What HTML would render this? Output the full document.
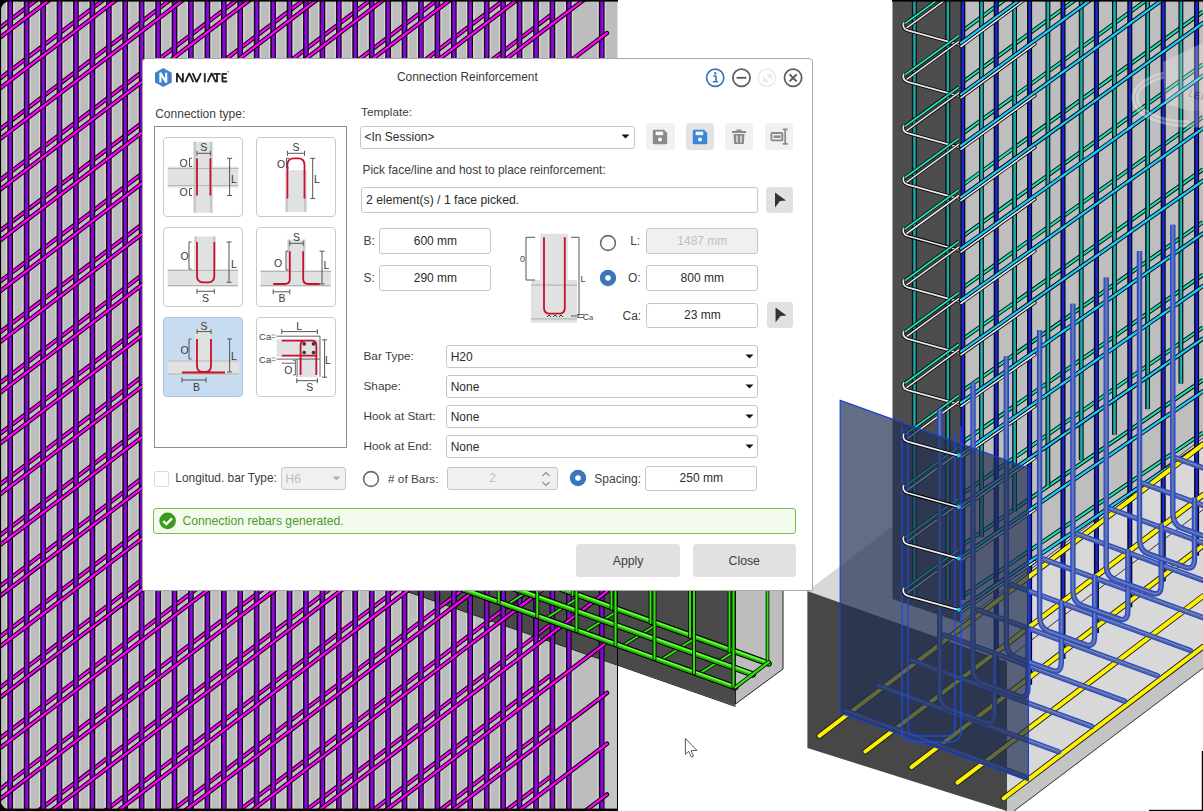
<!DOCTYPE html>
<html><head><meta charset="utf-8">
<style>
html,body{margin:0;padding:0;width:1203px;height:811px;overflow:hidden;background:#fff}
.t{position:absolute;font-family:"Liberation Sans", sans-serif;line-height:14px;white-space:nowrap}
.b{position:absolute;box-sizing:border-box}
svg{position:absolute}
</style></head><body>
<svg width="1203" height="811" viewBox="0 0 1203 811" style="position:absolute;left:0;top:0">
<rect width="1203" height="811" fill="#ffffff"/>
<polygon points="807.4,591 892.5,526.3 1203,290 1203,668.3 1014,811 1007,811 1007,662" fill="#d8d8d8"/>
<polygon points="1004,799.3 1203,645.5 1203,668.3 1014,811 1004,811" fill="#c4c4c4"/>
<line x1="1014" y1="811" x2="1203" y2="668.3" stroke="#333" stroke-width="1"/>
<polygon points="807.4,591 1007,662 1007,811 807.4,748" fill="#474747"/>
<polygon points="892.5,0 960.7,0 960.7,622.6 892.5,599" fill="#4d4d4d"/>
<polygon points="960.7,0 1203,0 1203,438 960.7,622.6" fill="#bebebe"/>
<line x1="960.7" y1="622.6" x2="1203" y2="438" stroke="#222" stroke-width="0.8"/>
<line x1="962.0" y1="31.3" x2="1011.3" y2="-5.0" stroke="#000" stroke-width="4.0" stroke-linecap="butt"/><line x1="962.0" y1="31.3" x2="1011.3" y2="-5.0" stroke="#1ee0b4" stroke-width="2.2" stroke-linecap="butt"/>
<line x1="962.0" y1="82.7" x2="1081.9" y2="-5.0" stroke="#000" stroke-width="4.0" stroke-linecap="butt"/><line x1="962.0" y1="82.7" x2="1081.9" y2="-5.0" stroke="#1ee0b4" stroke-width="2.2" stroke-linecap="butt"/>
<line x1="962.0" y1="134.1" x2="1153.5" y2="-5.0" stroke="#000" stroke-width="4.0" stroke-linecap="butt"/><line x1="962.0" y1="134.1" x2="1153.5" y2="-5.0" stroke="#1ee0b4" stroke-width="2.2" stroke-linecap="butt"/>
<line x1="962.0" y1="185.5" x2="1203.0" y2="11.7" stroke="#000" stroke-width="4.0" stroke-linecap="butt"/><line x1="962.0" y1="185.5" x2="1203.0" y2="11.7" stroke="#1ee0b4" stroke-width="2.2" stroke-linecap="butt"/>
<line x1="962.0" y1="236.9" x2="1203.0" y2="64.3" stroke="#000" stroke-width="4.0" stroke-linecap="butt"/><line x1="962.0" y1="236.9" x2="1203.0" y2="64.3" stroke="#1ee0b4" stroke-width="2.2" stroke-linecap="butt"/>
<line x1="962.0" y1="288.3" x2="1203.0" y2="116.9" stroke="#000" stroke-width="4.0" stroke-linecap="butt"/><line x1="962.0" y1="288.3" x2="1203.0" y2="116.9" stroke="#1ee0b4" stroke-width="2.2" stroke-linecap="butt"/>
<line x1="962.0" y1="339.7" x2="1203.0" y2="169.5" stroke="#000" stroke-width="4.0" stroke-linecap="butt"/><line x1="962.0" y1="339.7" x2="1203.0" y2="169.5" stroke="#1ee0b4" stroke-width="2.2" stroke-linecap="butt"/>
<line x1="962.0" y1="391.1" x2="1203.0" y2="222.1" stroke="#000" stroke-width="4.0" stroke-linecap="butt"/><line x1="962.0" y1="391.1" x2="1203.0" y2="222.1" stroke="#1ee0b4" stroke-width="2.2" stroke-linecap="butt"/>
<line x1="962.0" y1="442.5" x2="1203.0" y2="274.7" stroke="#000" stroke-width="4.0" stroke-linecap="butt"/><line x1="962.0" y1="442.5" x2="1203.0" y2="274.7" stroke="#1ee0b4" stroke-width="2.2" stroke-linecap="butt"/>
<line x1="962.0" y1="493.9" x2="1203.0" y2="327.4" stroke="#000" stroke-width="4.0" stroke-linecap="butt"/><line x1="962.0" y1="493.9" x2="1203.0" y2="327.4" stroke="#1ee0b4" stroke-width="2.2" stroke-linecap="butt"/>
<line x1="962.0" y1="545.3" x2="1203.0" y2="380.0" stroke="#000" stroke-width="4.0" stroke-linecap="butt"/><line x1="962.0" y1="545.3" x2="1203.0" y2="380.0" stroke="#1ee0b4" stroke-width="2.2" stroke-linecap="butt"/>
<line x1="962.0" y1="596.7" x2="1203.0" y2="432.6" stroke="#000" stroke-width="4.0" stroke-linecap="butt"/><line x1="962.0" y1="596.7" x2="1203.0" y2="432.6" stroke="#1ee0b4" stroke-width="2.2" stroke-linecap="butt"/>
<rect x="979.0" y="0.0" width="4.8" height="537.1" fill="#000"/><rect x="979.9" y="0.0" width="3.0" height="537.1" fill="#107070"/><rect x="980.7" y="0.0" width="1.8" height="537.1" fill="#20b0b0"/>
<rect x="1012.2" y="0.0" width="4.8" height="511.5" fill="#000"/><rect x="1013.1" y="0.0" width="3.0" height="511.5" fill="#107070"/><rect x="1013.9" y="0.0" width="1.8" height="511.5" fill="#20b0b0"/>
<rect x="1045.5" y="0.0" width="4.8" height="485.9" fill="#000"/><rect x="1046.4" y="0.0" width="3.0" height="485.9" fill="#107070"/><rect x="1047.2" y="0.0" width="1.8" height="485.9" fill="#20b0b0"/>
<rect x="1078.8" y="0.0" width="4.8" height="460.3" fill="#000"/><rect x="1079.7" y="0.0" width="3.0" height="460.3" fill="#107070"/><rect x="1080.5" y="0.0" width="1.8" height="460.3" fill="#20b0b0"/>
<rect x="1112.0" y="0.0" width="4.8" height="434.7" fill="#000"/><rect x="1112.9" y="0.0" width="3.0" height="434.7" fill="#107070"/><rect x="1113.7" y="0.0" width="1.8" height="434.7" fill="#20b0b0"/>
<rect x="1145.2" y="0.0" width="4.8" height="409.1" fill="#000"/><rect x="1146.2" y="0.0" width="3.0" height="409.1" fill="#107070"/><rect x="1147.0" y="0.0" width="1.8" height="409.1" fill="#20b0b0"/>
<rect x="1178.5" y="0.0" width="4.8" height="383.5" fill="#000"/><rect x="1179.4" y="0.0" width="3.0" height="383.5" fill="#107070"/><rect x="1180.2" y="0.0" width="1.8" height="383.5" fill="#20b0b0"/>
<rect x="960.3" y="0.0" width="5.0" height="600.0" fill="#000"/><rect x="961.2" y="0.0" width="3.2" height="600.0" fill="#0a1080"/><rect x="962.0" y="0.0" width="2.0" height="600.0" fill="#1a2ad0"/>
<rect x="993.7" y="0.0" width="5.0" height="710.4" fill="#000"/><rect x="994.6" y="0.0" width="3.2" height="710.4" fill="#0a1080"/><rect x="995.4" y="0.0" width="2.0" height="710.4" fill="#1a2ad0"/>
<rect x="1027.1" y="0.0" width="5.0" height="684.6" fill="#000"/><rect x="1028.0" y="0.0" width="3.2" height="684.6" fill="#0a1080"/><rect x="1028.8" y="0.0" width="2.0" height="684.6" fill="#1a2ad0"/>
<rect x="1060.5" y="0.0" width="5.0" height="658.8" fill="#000"/><rect x="1061.4" y="0.0" width="3.2" height="658.8" fill="#0a1080"/><rect x="1062.2" y="0.0" width="2.0" height="658.8" fill="#1a2ad0"/>
<rect x="1093.9" y="0.0" width="5.0" height="633.0" fill="#000"/><rect x="1094.8" y="0.0" width="3.2" height="633.0" fill="#0a1080"/><rect x="1095.6" y="0.0" width="2.0" height="633.0" fill="#1a2ad0"/>
<rect x="1127.3" y="0.0" width="5.0" height="607.2" fill="#000"/><rect x="1128.2" y="0.0" width="3.2" height="607.2" fill="#0a1080"/><rect x="1129.0" y="0.0" width="2.0" height="607.2" fill="#1a2ad0"/>
<rect x="1160.7" y="0.0" width="5.0" height="581.4" fill="#000"/><rect x="1161.6" y="0.0" width="3.2" height="581.4" fill="#0a1080"/><rect x="1162.4" y="0.0" width="2.0" height="581.4" fill="#1a2ad0"/>
<rect x="1194.1" y="0.0" width="5.0" height="555.6" fill="#000"/><rect x="1195.0" y="0.0" width="3.2" height="555.6" fill="#0a1080"/><rect x="1195.8" y="0.0" width="2.0" height="555.6" fill="#1a2ad0"/>
<line x1="961.0" y1="-4.9" x2="961.1" y2="-5.0" stroke="#000" stroke-width="3.2" stroke-linecap="round"/><line x1="961.0" y1="-4.9" x2="961.1" y2="-5.0" stroke="#e8e8e8" stroke-width="1.6" stroke-linecap="round"/>
<line x1="961.0" y1="43.0" x2="1026.3" y2="-5.0" stroke="#000" stroke-width="4.2" stroke-linecap="round"/><line x1="961.0" y1="43.0" x2="1026.3" y2="-5.0" stroke="#20c8f8" stroke-width="2.4" stroke-linecap="round"/>
<line x1="961.0" y1="46.5" x2="1031.1" y2="-5.0" stroke="#000" stroke-width="3.2" stroke-linecap="round"/><line x1="961.0" y1="46.5" x2="1031.1" y2="-5.0" stroke="#e8e8e8" stroke-width="1.6" stroke-linecap="round"/>
<line x1="961.0" y1="94.4" x2="1097.2" y2="-5.0" stroke="#000" stroke-width="4.2" stroke-linecap="round"/><line x1="961.0" y1="94.4" x2="1097.2" y2="-5.0" stroke="#20c8f8" stroke-width="2.4" stroke-linecap="round"/>
<line x1="961.0" y1="97.9" x2="1035.0" y2="43.9" stroke="#000" stroke-width="3.2" stroke-linecap="round"/><line x1="961.0" y1="97.9" x2="1035.0" y2="43.9" stroke="#e8e8e8" stroke-width="1.6" stroke-linecap="round"/>
<line x1="961.0" y1="145.8" x2="1169.0" y2="-5.0" stroke="#000" stroke-width="4.2" stroke-linecap="round"/><line x1="961.0" y1="145.8" x2="1169.0" y2="-5.0" stroke="#20c8f8" stroke-width="2.4" stroke-linecap="round"/>
<line x1="961.0" y1="149.3" x2="1035.0" y2="95.6" stroke="#000" stroke-width="3.2" stroke-linecap="round"/><line x1="961.0" y1="149.3" x2="1035.0" y2="95.6" stroke="#e8e8e8" stroke-width="1.6" stroke-linecap="round"/>
<line x1="961.0" y1="197.2" x2="1203.0" y2="23.0" stroke="#000" stroke-width="4.2" stroke-linecap="round"/><line x1="961.0" y1="197.2" x2="1203.0" y2="23.0" stroke="#20c8f8" stroke-width="2.4" stroke-linecap="round"/>
<line x1="961.0" y1="200.7" x2="1035.0" y2="147.4" stroke="#000" stroke-width="3.2" stroke-linecap="round"/><line x1="961.0" y1="200.7" x2="1035.0" y2="147.4" stroke="#e8e8e8" stroke-width="1.6" stroke-linecap="round"/>
<line x1="961.0" y1="248.6" x2="1203.0" y2="75.6" stroke="#000" stroke-width="4.2" stroke-linecap="round"/><line x1="961.0" y1="248.6" x2="1203.0" y2="75.6" stroke="#20c8f8" stroke-width="2.4" stroke-linecap="round"/>
<line x1="961.0" y1="252.1" x2="1035.0" y2="199.2" stroke="#000" stroke-width="3.2" stroke-linecap="round"/><line x1="961.0" y1="252.1" x2="1035.0" y2="199.2" stroke="#e8e8e8" stroke-width="1.6" stroke-linecap="round"/>
<line x1="961.0" y1="300.0" x2="1203.0" y2="128.2" stroke="#000" stroke-width="4.2" stroke-linecap="round"/><line x1="961.0" y1="300.0" x2="1203.0" y2="128.2" stroke="#20c8f8" stroke-width="2.4" stroke-linecap="round"/>
<line x1="961.0" y1="303.5" x2="1035.0" y2="251.0" stroke="#000" stroke-width="3.2" stroke-linecap="round"/><line x1="961.0" y1="303.5" x2="1035.0" y2="251.0" stroke="#e8e8e8" stroke-width="1.6" stroke-linecap="round"/>
<line x1="961.0" y1="351.4" x2="1203.0" y2="180.8" stroke="#000" stroke-width="4.2" stroke-linecap="round"/><line x1="961.0" y1="351.4" x2="1203.0" y2="180.8" stroke="#20c8f8" stroke-width="2.4" stroke-linecap="round"/>
<line x1="961.0" y1="354.9" x2="1035.0" y2="302.7" stroke="#000" stroke-width="3.2" stroke-linecap="round"/><line x1="961.0" y1="354.9" x2="1035.0" y2="302.7" stroke="#e8e8e8" stroke-width="1.6" stroke-linecap="round"/>
<line x1="961.0" y1="402.8" x2="1203.0" y2="233.4" stroke="#000" stroke-width="4.2" stroke-linecap="round"/><line x1="961.0" y1="402.8" x2="1203.0" y2="233.4" stroke="#20c8f8" stroke-width="2.4" stroke-linecap="round"/>
<line x1="961.0" y1="406.3" x2="1035.0" y2="354.5" stroke="#000" stroke-width="3.2" stroke-linecap="round"/><line x1="961.0" y1="406.3" x2="1035.0" y2="354.5" stroke="#e8e8e8" stroke-width="1.6" stroke-linecap="round"/>
<line x1="961.0" y1="454.2" x2="1203.0" y2="286.0" stroke="#000" stroke-width="4.2" stroke-linecap="round"/><line x1="961.0" y1="454.2" x2="1203.0" y2="286.0" stroke="#20c8f8" stroke-width="2.4" stroke-linecap="round"/>
<line x1="961.0" y1="457.7" x2="1035.0" y2="406.3" stroke="#000" stroke-width="3.2" stroke-linecap="round"/><line x1="961.0" y1="457.7" x2="1035.0" y2="406.3" stroke="#e8e8e8" stroke-width="1.6" stroke-linecap="round"/>
<line x1="961.0" y1="505.6" x2="1203.0" y2="338.6" stroke="#000" stroke-width="4.2" stroke-linecap="round"/><line x1="961.0" y1="505.6" x2="1203.0" y2="338.6" stroke="#20c8f8" stroke-width="2.4" stroke-linecap="round"/>
<line x1="961.0" y1="509.1" x2="1035.0" y2="458.0" stroke="#000" stroke-width="3.2" stroke-linecap="round"/><line x1="961.0" y1="509.1" x2="1035.0" y2="458.0" stroke="#e8e8e8" stroke-width="1.6" stroke-linecap="round"/>
<line x1="961.0" y1="557.0" x2="1203.0" y2="391.2" stroke="#000" stroke-width="4.2" stroke-linecap="round"/><line x1="961.0" y1="557.0" x2="1203.0" y2="391.2" stroke="#20c8f8" stroke-width="2.4" stroke-linecap="round"/>
<line x1="961.0" y1="560.5" x2="1035.0" y2="509.8" stroke="#000" stroke-width="3.2" stroke-linecap="round"/><line x1="961.0" y1="560.5" x2="1035.0" y2="509.8" stroke="#e8e8e8" stroke-width="1.6" stroke-linecap="round"/>
<line x1="961.0" y1="608.4" x2="1203.0" y2="443.8" stroke="#000" stroke-width="4.2" stroke-linecap="round"/><line x1="961.0" y1="608.4" x2="1203.0" y2="443.8" stroke="#20c8f8" stroke-width="2.4" stroke-linecap="round"/>
<line x1="961.0" y1="611.9" x2="1035.0" y2="561.6" stroke="#000" stroke-width="3.2" stroke-linecap="round"/><line x1="961.0" y1="611.9" x2="1035.0" y2="561.6" stroke="#e8e8e8" stroke-width="1.6" stroke-linecap="round"/>
<rect x="911.9" y="0.0" width="4.8" height="600.0" fill="#000"/><rect x="912.8" y="0.0" width="3.0" height="600.0" fill="#106868"/><rect x="913.6" y="0.0" width="1.8" height="600.0" fill="#20a8a8"/>
<rect x="945.4" y="0.0" width="4.8" height="600.0" fill="#000"/><rect x="946.3" y="0.0" width="3.0" height="600.0" fill="#106868"/><rect x="947.1" y="0.0" width="1.8" height="600.0" fill="#20a8a8"/>
<line x1="903.7" y1="24.4" x2="958.7" y2="-15.6" stroke="#000" stroke-width="3.3" stroke-linecap="butt"/><line x1="903.7" y1="24.4" x2="958.7" y2="-15.6" stroke="#1ee0b4" stroke-width="1.9" stroke-linecap="butt"/>
<line x1="906.0" y1="28.4" x2="959.0" y2="-10.1" stroke="#000" stroke-width="3.0" stroke-linecap="butt"/><line x1="906.0" y1="28.4" x2="959.0" y2="-10.1" stroke="#e6e6e6" stroke-width="1.6" stroke-linecap="butt"/>
<path d="M903.7,22.4 q-2,6 4,8 L958.4,44.4" fill="none" stroke="#000" stroke-width="3.4"/>
<path d="M903.7,22.4 q-2,6 4,8 L958.4,44.4" fill="none" stroke="#e6e6e6" stroke-width="1.8"/>
<line x1="903.7" y1="75.8" x2="958.7" y2="35.8" stroke="#000" stroke-width="3.3" stroke-linecap="butt"/><line x1="903.7" y1="75.8" x2="958.7" y2="35.8" stroke="#1ee0b4" stroke-width="1.9" stroke-linecap="butt"/>
<line x1="906.0" y1="79.8" x2="959.0" y2="41.3" stroke="#000" stroke-width="3.0" stroke-linecap="butt"/><line x1="906.0" y1="79.8" x2="959.0" y2="41.3" stroke="#e6e6e6" stroke-width="1.6" stroke-linecap="butt"/>
<path d="M903.7,73.8 q-2,6 4,8 L958.4,95.8" fill="none" stroke="#000" stroke-width="3.4"/>
<path d="M903.7,73.8 q-2,6 4,8 L958.4,95.8" fill="none" stroke="#e6e6e6" stroke-width="1.8"/>
<line x1="903.7" y1="127.2" x2="958.7" y2="87.2" stroke="#000" stroke-width="3.3" stroke-linecap="butt"/><line x1="903.7" y1="127.2" x2="958.7" y2="87.2" stroke="#1ee0b4" stroke-width="1.9" stroke-linecap="butt"/>
<line x1="906.0" y1="131.2" x2="959.0" y2="92.7" stroke="#000" stroke-width="3.0" stroke-linecap="butt"/><line x1="906.0" y1="131.2" x2="959.0" y2="92.7" stroke="#e6e6e6" stroke-width="1.6" stroke-linecap="butt"/>
<path d="M903.7,125.2 q-2,6 4,8 L958.4,147.2" fill="none" stroke="#000" stroke-width="3.4"/>
<path d="M903.7,125.2 q-2,6 4,8 L958.4,147.2" fill="none" stroke="#e6e6e6" stroke-width="1.8"/>
<line x1="903.7" y1="178.6" x2="958.7" y2="138.6" stroke="#000" stroke-width="3.3" stroke-linecap="butt"/><line x1="903.7" y1="178.6" x2="958.7" y2="138.6" stroke="#1ee0b4" stroke-width="1.9" stroke-linecap="butt"/>
<line x1="906.0" y1="182.6" x2="959.0" y2="144.1" stroke="#000" stroke-width="3.0" stroke-linecap="butt"/><line x1="906.0" y1="182.6" x2="959.0" y2="144.1" stroke="#e6e6e6" stroke-width="1.6" stroke-linecap="butt"/>
<path d="M903.7,176.6 q-2,6 4,8 L958.4,198.6" fill="none" stroke="#000" stroke-width="3.4"/>
<path d="M903.7,176.6 q-2,6 4,8 L958.4,198.6" fill="none" stroke="#e6e6e6" stroke-width="1.8"/>
<line x1="903.7" y1="230.0" x2="958.7" y2="190.0" stroke="#000" stroke-width="3.3" stroke-linecap="butt"/><line x1="903.7" y1="230.0" x2="958.7" y2="190.0" stroke="#1ee0b4" stroke-width="1.9" stroke-linecap="butt"/>
<line x1="906.0" y1="234.0" x2="959.0" y2="195.5" stroke="#000" stroke-width="3.0" stroke-linecap="butt"/><line x1="906.0" y1="234.0" x2="959.0" y2="195.5" stroke="#e6e6e6" stroke-width="1.6" stroke-linecap="butt"/>
<path d="M903.7,228.0 q-2,6 4,8 L958.4,250.0" fill="none" stroke="#000" stroke-width="3.4"/>
<path d="M903.7,228.0 q-2,6 4,8 L958.4,250.0" fill="none" stroke="#e6e6e6" stroke-width="1.8"/>
<line x1="903.7" y1="281.4" x2="958.7" y2="241.4" stroke="#000" stroke-width="3.3" stroke-linecap="butt"/><line x1="903.7" y1="281.4" x2="958.7" y2="241.4" stroke="#1ee0b4" stroke-width="1.9" stroke-linecap="butt"/>
<line x1="906.0" y1="285.4" x2="959.0" y2="246.9" stroke="#000" stroke-width="3.0" stroke-linecap="butt"/><line x1="906.0" y1="285.4" x2="959.0" y2="246.9" stroke="#e6e6e6" stroke-width="1.6" stroke-linecap="butt"/>
<path d="M903.7,279.4 q-2,6 4,8 L958.4,301.4" fill="none" stroke="#000" stroke-width="3.4"/>
<path d="M903.7,279.4 q-2,6 4,8 L958.4,301.4" fill="none" stroke="#e6e6e6" stroke-width="1.8"/>
<line x1="903.7" y1="332.8" x2="958.7" y2="292.8" stroke="#000" stroke-width="3.3" stroke-linecap="butt"/><line x1="903.7" y1="332.8" x2="958.7" y2="292.8" stroke="#1ee0b4" stroke-width="1.9" stroke-linecap="butt"/>
<line x1="906.0" y1="336.8" x2="959.0" y2="298.3" stroke="#000" stroke-width="3.0" stroke-linecap="butt"/><line x1="906.0" y1="336.8" x2="959.0" y2="298.3" stroke="#e6e6e6" stroke-width="1.6" stroke-linecap="butt"/>
<path d="M903.7,330.8 q-2,6 4,8 L958.4,352.8" fill="none" stroke="#000" stroke-width="3.4"/>
<path d="M903.7,330.8 q-2,6 4,8 L958.4,352.8" fill="none" stroke="#e6e6e6" stroke-width="1.8"/>
<line x1="903.7" y1="384.2" x2="958.7" y2="344.2" stroke="#000" stroke-width="3.3" stroke-linecap="butt"/><line x1="903.7" y1="384.2" x2="958.7" y2="344.2" stroke="#1ee0b4" stroke-width="1.9" stroke-linecap="butt"/>
<line x1="906.0" y1="388.2" x2="959.0" y2="349.7" stroke="#000" stroke-width="3.0" stroke-linecap="butt"/><line x1="906.0" y1="388.2" x2="959.0" y2="349.7" stroke="#e6e6e6" stroke-width="1.6" stroke-linecap="butt"/>
<path d="M903.7,382.2 q-2,6 4,8 L958.4,404.2" fill="none" stroke="#000" stroke-width="3.4"/>
<path d="M903.7,382.2 q-2,6 4,8 L958.4,404.2" fill="none" stroke="#e6e6e6" stroke-width="1.8"/>
<line x1="903.7" y1="435.6" x2="958.7" y2="395.6" stroke="#000" stroke-width="3.3" stroke-linecap="butt"/><line x1="903.7" y1="435.6" x2="958.7" y2="395.6" stroke="#1ee0b4" stroke-width="1.9" stroke-linecap="butt"/>
<line x1="906.0" y1="439.6" x2="959.0" y2="401.1" stroke="#000" stroke-width="3.0" stroke-linecap="butt"/><line x1="906.0" y1="439.6" x2="959.0" y2="401.1" stroke="#e6e6e6" stroke-width="1.6" stroke-linecap="butt"/>
<path d="M903.7,433.6 q-2,6 4,8 L958.4,455.6" fill="none" stroke="#000" stroke-width="3.4"/>
<path d="M903.7,433.6 q-2,6 4,8 L958.4,455.6" fill="none" stroke="#e6e6e6" stroke-width="1.8"/>
<line x1="903.7" y1="487.0" x2="958.7" y2="447.0" stroke="#000" stroke-width="3.3" stroke-linecap="butt"/><line x1="903.7" y1="487.0" x2="958.7" y2="447.0" stroke="#1ee0b4" stroke-width="1.9" stroke-linecap="butt"/>
<line x1="906.0" y1="491.0" x2="959.0" y2="452.5" stroke="#000" stroke-width="3.0" stroke-linecap="butt"/><line x1="906.0" y1="491.0" x2="959.0" y2="452.5" stroke="#e6e6e6" stroke-width="1.6" stroke-linecap="butt"/>
<path d="M903.7,485.0 q-2,6 4,8 L958.4,507.0" fill="none" stroke="#000" stroke-width="3.4"/>
<path d="M903.7,485.0 q-2,6 4,8 L958.4,507.0" fill="none" stroke="#e6e6e6" stroke-width="1.8"/>
<line x1="903.7" y1="538.4" x2="958.7" y2="498.4" stroke="#000" stroke-width="3.3" stroke-linecap="butt"/><line x1="903.7" y1="538.4" x2="958.7" y2="498.4" stroke="#1ee0b4" stroke-width="1.9" stroke-linecap="butt"/>
<line x1="906.0" y1="542.4" x2="959.0" y2="503.9" stroke="#000" stroke-width="3.0" stroke-linecap="butt"/><line x1="906.0" y1="542.4" x2="959.0" y2="503.9" stroke="#e6e6e6" stroke-width="1.6" stroke-linecap="butt"/>
<path d="M903.7,536.4 q-2,6 4,8 L958.4,558.4" fill="none" stroke="#000" stroke-width="3.4"/>
<path d="M903.7,536.4 q-2,6 4,8 L958.4,558.4" fill="none" stroke="#e6e6e6" stroke-width="1.8"/>
<line x1="903.7" y1="589.8" x2="958.7" y2="549.8" stroke="#000" stroke-width="3.3" stroke-linecap="butt"/><line x1="903.7" y1="589.8" x2="958.7" y2="549.8" stroke="#1ee0b4" stroke-width="1.9" stroke-linecap="butt"/>
<line x1="906.0" y1="593.8" x2="959.0" y2="555.3" stroke="#000" stroke-width="3.0" stroke-linecap="butt"/><line x1="906.0" y1="593.8" x2="959.0" y2="555.3" stroke="#e6e6e6" stroke-width="1.6" stroke-linecap="butt"/>
<path d="M903.7,587.8 q-2,6 4,8 L958.4,609.8" fill="none" stroke="#000" stroke-width="3.4"/>
<path d="M903.7,587.8 q-2,6 4,8 L958.4,609.8" fill="none" stroke="#e6e6e6" stroke-width="1.8"/>
<line x1="1000" y1="664.0" x2="1203" y2="509.7" stroke="#222" stroke-width="0.9"/>
<line x1="819.4" y1="735.9" x2="1203.0" y2="444.4" stroke="#1a1a1a" stroke-width="5.8" stroke-linecap="round"/><line x1="819.4" y1="735.9" x2="1203.0" y2="444.4" stroke="#fff200" stroke-width="4.0" stroke-linecap="round"/>
<line x1="865.4" y1="751.5" x2="1203.0" y2="495.0" stroke="#1a1a1a" stroke-width="5.8" stroke-linecap="round"/><line x1="865.4" y1="751.5" x2="1203.0" y2="495.0" stroke="#fff200" stroke-width="4.0" stroke-linecap="round"/>
<line x1="911.5" y1="767.1" x2="1203.0" y2="545.6" stroke="#1a1a1a" stroke-width="5.8" stroke-linecap="round"/><line x1="911.5" y1="767.1" x2="1203.0" y2="545.6" stroke="#fff200" stroke-width="4.0" stroke-linecap="round"/>
<line x1="957.5" y1="782.7" x2="1203.0" y2="596.2" stroke="#1a1a1a" stroke-width="5.8" stroke-linecap="round"/><line x1="957.5" y1="782.7" x2="1203.0" y2="596.2" stroke="#fff200" stroke-width="4.0" stroke-linecap="round"/>
<line x1="1003.6" y1="798.3" x2="1203.0" y2="646.8" stroke="#1a1a1a" stroke-width="5.8" stroke-linecap="round"/><line x1="1003.6" y1="798.3" x2="1203.0" y2="646.8" stroke="#fff200" stroke-width="4.0" stroke-linecap="round"/>
<line x1="845.5" y1="710.9" x2="1025.5" y2="777.0" stroke="#2046d8" stroke-width="5.4" stroke-linecap="round"/><line x1="845.5" y1="710.9" x2="1025.5" y2="777.0" stroke="#56649a" stroke-width="3.4" stroke-linecap="round"/>
<line x1="845.5" y1="710.4" x2="1025.5" y2="776.5" stroke="#7c8cc4" stroke-width="1" stroke-linecap="round"/>
<line x1="878.5" y1="685.6" x2="1058.5" y2="751.7" stroke="#2046d8" stroke-width="5.4" stroke-linecap="round"/><line x1="878.5" y1="685.6" x2="1058.5" y2="751.7" stroke="#56649a" stroke-width="3.4" stroke-linecap="round"/>
<line x1="878.5" y1="685.1" x2="1058.5" y2="751.2" stroke="#7c8cc4" stroke-width="1" stroke-linecap="round"/>
<line x1="911.5" y1="660.3" x2="1091.5" y2="726.4" stroke="#2046d8" stroke-width="5.4" stroke-linecap="round"/><line x1="911.5" y1="660.3" x2="1091.5" y2="726.4" stroke="#56649a" stroke-width="3.4" stroke-linecap="round"/>
<line x1="911.5" y1="659.8" x2="1091.5" y2="725.9" stroke="#7c8cc4" stroke-width="1" stroke-linecap="round"/>
<line x1="944.5" y1="635.0" x2="1124.5" y2="701.1" stroke="#2046d8" stroke-width="5.4" stroke-linecap="round"/><line x1="944.5" y1="635.0" x2="1124.5" y2="701.1" stroke="#56649a" stroke-width="3.4" stroke-linecap="round"/>
<line x1="944.5" y1="634.5" x2="1124.5" y2="700.6" stroke="#7c8cc4" stroke-width="1" stroke-linecap="round"/>
<line x1="977.5" y1="609.7" x2="1157.5" y2="675.8" stroke="#2046d8" stroke-width="5.4" stroke-linecap="round"/><line x1="977.5" y1="609.7" x2="1157.5" y2="675.8" stroke="#56649a" stroke-width="3.4" stroke-linecap="round"/>
<line x1="977.5" y1="609.2" x2="1157.5" y2="675.3" stroke="#7c8cc4" stroke-width="1" stroke-linecap="round"/>
<line x1="1010.5" y1="584.4" x2="1190.5" y2="650.5" stroke="#2046d8" stroke-width="5.4" stroke-linecap="round"/><line x1="1010.5" y1="584.4" x2="1190.5" y2="650.5" stroke="#56649a" stroke-width="3.4" stroke-linecap="round"/>
<line x1="1010.5" y1="583.9" x2="1190.5" y2="650.0" stroke="#7c8cc4" stroke-width="1" stroke-linecap="round"/>
<line x1="1043.5" y1="559.1" x2="1223.5" y2="625.2" stroke="#2046d8" stroke-width="5.4" stroke-linecap="round"/><line x1="1043.5" y1="559.1" x2="1223.5" y2="625.2" stroke="#56649a" stroke-width="3.4" stroke-linecap="round"/>
<line x1="1043.5" y1="558.6" x2="1223.5" y2="624.7" stroke="#7c8cc4" stroke-width="1" stroke-linecap="round"/>
<line x1="1076.5" y1="533.8" x2="1256.5" y2="599.9" stroke="#2046d8" stroke-width="5.4" stroke-linecap="round"/><line x1="1076.5" y1="533.8" x2="1256.5" y2="599.9" stroke="#56649a" stroke-width="3.4" stroke-linecap="round"/>
<line x1="1076.5" y1="533.3" x2="1256.5" y2="599.4" stroke="#7c8cc4" stroke-width="1" stroke-linecap="round"/>
<line x1="1109.5" y1="508.5" x2="1289.5" y2="574.6" stroke="#2046d8" stroke-width="5.4" stroke-linecap="round"/><line x1="1109.5" y1="508.5" x2="1289.5" y2="574.6" stroke="#56649a" stroke-width="3.4" stroke-linecap="round"/>
<line x1="1109.5" y1="508.0" x2="1289.5" y2="574.1" stroke="#7c8cc4" stroke-width="1" stroke-linecap="round"/>
<line x1="1142.5" y1="483.2" x2="1322.5" y2="549.3" stroke="#2046d8" stroke-width="5.4" stroke-linecap="round"/><line x1="1142.5" y1="483.2" x2="1322.5" y2="549.3" stroke="#56649a" stroke-width="3.4" stroke-linecap="round"/>
<line x1="1142.5" y1="482.7" x2="1322.5" y2="548.8" stroke="#7c8cc4" stroke-width="1" stroke-linecap="round"/>
<line x1="1175.5" y1="457.9" x2="1355.5" y2="524.0" stroke="#2046d8" stroke-width="5.4" stroke-linecap="round"/><line x1="1175.5" y1="457.9" x2="1355.5" y2="524.0" stroke="#56649a" stroke-width="3.4" stroke-linecap="round"/>
<line x1="1175.5" y1="457.4" x2="1355.5" y2="523.5" stroke="#7c8cc4" stroke-width="1" stroke-linecap="round"/>
<path d="M939.7,408.9 L939.7,693.4 Q939.7,705.4 948.7,708.7 L985.7,722.1 Q994.7,725.4 994.7,713.4 L994.7,652.4" fill="none" stroke="#2046d8" stroke-width="5.4"/>
<path d="M939.7,408.9 L939.7,693.4 Q939.7,705.4 948.7,708.7 L985.7,722.1 Q994.7,725.4 994.7,713.4 L994.7,652.4" fill="none" stroke="#56649a" stroke-width="3.4" stroke-opacity="0.85"/>
<path d="M939.7,408.9 L939.7,693.4 Q939.7,705.4 948.7,708.7 L985.7,722.1 Q994.7,725.4 994.7,713.4 L994.7,652.4" fill="none" stroke="#7c8cc4" stroke-width="0.9"/>
<path d="M973.0,382.6 L973.0,667.6 Q973.0,679.6 982.0,682.9 L1019.0,696.3 Q1028.0,699.6 1028.0,687.6 L1028.0,626.6" fill="none" stroke="#2046d8" stroke-width="5.4"/>
<path d="M973.0,382.6 L973.0,667.6 Q973.0,679.6 982.0,682.9 L1019.0,696.3 Q1028.0,699.6 1028.0,687.6 L1028.0,626.6" fill="none" stroke="#56649a" stroke-width="3.4" stroke-opacity="0.85"/>
<path d="M973.0,382.6 L973.0,667.6 Q973.0,679.6 982.0,682.9 L1019.0,696.3 Q1028.0,699.6 1028.0,687.6 L1028.0,626.6" fill="none" stroke="#7c8cc4" stroke-width="0.9"/>
<path d="M1006.3,356.3 L1006.3,641.8 Q1006.3,653.8 1015.3,657.1 L1052.3,670.5 Q1061.3,673.8 1061.3,661.8 L1061.3,600.8" fill="none" stroke="#2046d8" stroke-width="5.4"/>
<path d="M1006.3,356.3 L1006.3,641.8 Q1006.3,653.8 1015.3,657.1 L1052.3,670.5 Q1061.3,673.8 1061.3,661.8 L1061.3,600.8" fill="none" stroke="#56649a" stroke-width="3.4" stroke-opacity="0.85"/>
<path d="M1006.3,356.3 L1006.3,641.8 Q1006.3,653.8 1015.3,657.1 L1052.3,670.5 Q1061.3,673.8 1061.3,661.8 L1061.3,600.8" fill="none" stroke="#7c8cc4" stroke-width="0.9"/>
<path d="M1039.6,330.0 L1039.6,616.0 Q1039.6,628.0 1048.6,631.3 L1085.6,644.7 Q1094.6,648.0 1094.6,636.0 L1094.6,575.0" fill="none" stroke="#2046d8" stroke-width="5.4"/>
<path d="M1039.6,330.0 L1039.6,616.0 Q1039.6,628.0 1048.6,631.3 L1085.6,644.7 Q1094.6,648.0 1094.6,636.0 L1094.6,575.0" fill="none" stroke="#56649a" stroke-width="3.4" stroke-opacity="0.85"/>
<path d="M1039.6,330.0 L1039.6,616.0 Q1039.6,628.0 1048.6,631.3 L1085.6,644.7 Q1094.6,648.0 1094.6,636.0 L1094.6,575.0" fill="none" stroke="#7c8cc4" stroke-width="0.9"/>
<path d="M1072.9,303.7 L1072.9,590.2 Q1072.9,602.2 1081.9,605.5 L1118.9,618.9 Q1127.9,622.2 1127.9,610.2 L1127.9,549.2" fill="none" stroke="#2046d8" stroke-width="5.4"/>
<path d="M1072.9,303.7 L1072.9,590.2 Q1072.9,602.2 1081.9,605.5 L1118.9,618.9 Q1127.9,622.2 1127.9,610.2 L1127.9,549.2" fill="none" stroke="#56649a" stroke-width="3.4" stroke-opacity="0.85"/>
<path d="M1072.9,303.7 L1072.9,590.2 Q1072.9,602.2 1081.9,605.5 L1118.9,618.9 Q1127.9,622.2 1127.9,610.2 L1127.9,549.2" fill="none" stroke="#7c8cc4" stroke-width="0.9"/>
<path d="M1106.2,277.4 L1106.2,564.4 Q1106.2,576.4 1115.2,579.7 L1152.2,593.1 Q1161.2,596.4 1161.2,584.4 L1161.2,523.4" fill="none" stroke="#2046d8" stroke-width="5.4"/>
<path d="M1106.2,277.4 L1106.2,564.4 Q1106.2,576.4 1115.2,579.7 L1152.2,593.1 Q1161.2,596.4 1161.2,584.4 L1161.2,523.4" fill="none" stroke="#56649a" stroke-width="3.4" stroke-opacity="0.85"/>
<path d="M1106.2,277.4 L1106.2,564.4 Q1106.2,576.4 1115.2,579.7 L1152.2,593.1 Q1161.2,596.4 1161.2,584.4 L1161.2,523.4" fill="none" stroke="#7c8cc4" stroke-width="0.9"/>
<path d="M1139.5,251.1 L1139.5,538.6 Q1139.5,550.6 1148.5,553.9 L1185.5,567.3 Q1194.5,570.6 1194.5,558.6 L1194.5,497.6" fill="none" stroke="#2046d8" stroke-width="5.4"/>
<path d="M1139.5,251.1 L1139.5,538.6 Q1139.5,550.6 1148.5,553.9 L1185.5,567.3 Q1194.5,570.6 1194.5,558.6 L1194.5,497.6" fill="none" stroke="#56649a" stroke-width="3.4" stroke-opacity="0.85"/>
<path d="M1139.5,251.1 L1139.5,538.6 Q1139.5,550.6 1148.5,553.9 L1185.5,567.3 Q1194.5,570.6 1194.5,558.6 L1194.5,497.6" fill="none" stroke="#7c8cc4" stroke-width="0.9"/>
<path d="M1172.8,224.8 L1172.8,512.8 Q1172.8,524.8 1181.8,528.1 L1218.8,541.5 Q1227.8,544.8 1227.8,532.8 L1227.8,471.8" fill="none" stroke="#2046d8" stroke-width="5.4"/>
<path d="M1172.8,224.8 L1172.8,512.8 Q1172.8,524.8 1181.8,528.1 L1218.8,541.5 Q1227.8,544.8 1227.8,532.8 L1227.8,471.8" fill="none" stroke="#56649a" stroke-width="3.4" stroke-opacity="0.85"/>
<path d="M1172.8,224.8 L1172.8,512.8 Q1172.8,524.8 1181.8,528.1 L1218.8,541.5 Q1227.8,544.8 1227.8,532.8 L1227.8,471.8" fill="none" stroke="#7c8cc4" stroke-width="0.9"/>
<path d="M1206.1,198.5 L1206.1,487.0 Q1206.1,499.0 1215.1,502.3 L1252.1,515.7 Q1261.1,519.0 1261.1,507.0 L1261.1,446.0" fill="none" stroke="#2046d8" stroke-width="5.4"/>
<path d="M1206.1,198.5 L1206.1,487.0 Q1206.1,499.0 1215.1,502.3 L1252.1,515.7 Q1261.1,519.0 1261.1,507.0 L1261.1,446.0" fill="none" stroke="#56649a" stroke-width="3.4" stroke-opacity="0.85"/>
<path d="M1206.1,198.5 L1206.1,487.0 Q1206.1,499.0 1215.1,502.3 L1252.1,515.7 Q1261.1,519.0 1261.1,507.0 L1261.1,446.0" fill="none" stroke="#7c8cc4" stroke-width="0.9"/>
<polygon points="840.2,400.4 1028.4,468.2 1028.4,780.7 840.2,713" fill="#213153" fill-opacity="0.70" stroke="#1a40d0" stroke-width="1.2"/>
<path d="M902,426 V730 Q902,742 914,742 H949 Q961,742 961,730 V426" fill="none" stroke="#1f48e0" stroke-width="1.3"/>
<path d="M908,430 V727 Q908,736 917,736 H946 Q955,736 955,727 V430" fill="none" stroke="#1f48e0" stroke-width="1.3"/>
<path d="M903.7,433.6 q-2,6 4,8 L958.4,455.6" fill="none" stroke="#000" stroke-width="3.4"/>
<path d="M903.7,433.6 q-2,6 4,8 L958.4,455.6" fill="none" stroke="#ececec" stroke-width="1.8"/>
<circle cx="958.8" cy="455.6" r="2" fill="#20c8f0"/>
<path d="M903.7,485.0 q-2,6 4,8 L958.4,507.0" fill="none" stroke="#000" stroke-width="3.4"/>
<path d="M903.7,485.0 q-2,6 4,8 L958.4,507.0" fill="none" stroke="#ececec" stroke-width="1.8"/>
<circle cx="958.8" cy="507.0" r="2" fill="#20c8f0"/>
<path d="M903.7,536.4 q-2,6 4,8 L958.4,558.4" fill="none" stroke="#000" stroke-width="3.4"/>
<path d="M903.7,536.4 q-2,6 4,8 L958.4,558.4" fill="none" stroke="#ececec" stroke-width="1.8"/>
<circle cx="958.8" cy="558.4" r="2" fill="#20c8f0"/>
<path d="M903.7,587.8 q-2,6 4,8 L958.4,609.8" fill="none" stroke="#000" stroke-width="3.4"/>
<path d="M903.7,587.8 q-2,6 4,8 L958.4,609.8" fill="none" stroke="#ececec" stroke-width="1.8"/>
<circle cx="958.8" cy="609.8" r="2" fill="#20c8f0"/>
<rect x="0" y="0" width="617.5" height="811" fill="#bdbdbd"/>
<rect x="6.0" y="0" width="1" height="811" fill="#dadada"/>
<rect x="13.6" y="0" width="1" height="811" fill="#d6d6d6"/>
<rect x="22.4" y="0" width="1" height="811" fill="#dadada"/>
<rect x="30.0" y="0" width="1" height="811" fill="#d6d6d6"/>
<rect x="38.9" y="0" width="1" height="811" fill="#dadada"/>
<rect x="46.5" y="0" width="1" height="811" fill="#d6d6d6"/>
<rect x="55.3" y="0" width="1" height="811" fill="#dadada"/>
<rect x="62.9" y="0" width="1" height="811" fill="#d6d6d6"/>
<rect x="71.7" y="0" width="1" height="811" fill="#dadada"/>
<rect x="79.3" y="0" width="1" height="811" fill="#d6d6d6"/>
<rect x="88.2" y="0" width="1" height="811" fill="#dadada"/>
<rect x="95.8" y="0" width="1" height="811" fill="#d6d6d6"/>
<rect x="104.6" y="0" width="1" height="811" fill="#dadada"/>
<rect x="112.2" y="0" width="1" height="811" fill="#d6d6d6"/>
<rect x="121.0" y="0" width="1" height="811" fill="#dadada"/>
<rect x="128.6" y="0" width="1" height="811" fill="#d6d6d6"/>
<rect x="137.4" y="0" width="1" height="811" fill="#dadada"/>
<rect x="145.0" y="0" width="1" height="811" fill="#d6d6d6"/>
<rect x="153.9" y="0" width="1" height="811" fill="#dadada"/>
<rect x="161.5" y="0" width="1" height="811" fill="#d6d6d6"/>
<rect x="170.3" y="0" width="1" height="811" fill="#dadada"/>
<rect x="177.9" y="0" width="1" height="811" fill="#d6d6d6"/>
<rect x="186.7" y="0" width="1" height="811" fill="#dadada"/>
<rect x="194.3" y="0" width="1" height="811" fill="#d6d6d6"/>
<rect x="203.2" y="0" width="1" height="811" fill="#dadada"/>
<rect x="210.8" y="0" width="1" height="811" fill="#d6d6d6"/>
<rect x="219.6" y="0" width="1" height="811" fill="#dadada"/>
<rect x="227.2" y="0" width="1" height="811" fill="#d6d6d6"/>
<rect x="236.0" y="0" width="1" height="811" fill="#dadada"/>
<rect x="243.6" y="0" width="1" height="811" fill="#d6d6d6"/>
<rect x="252.4" y="0" width="1" height="811" fill="#dadada"/>
<rect x="260.0" y="0" width="1" height="811" fill="#d6d6d6"/>
<rect x="268.9" y="0" width="1" height="811" fill="#dadada"/>
<rect x="276.5" y="0" width="1" height="811" fill="#d6d6d6"/>
<rect x="285.3" y="0" width="1" height="811" fill="#dadada"/>
<rect x="292.9" y="0" width="1" height="811" fill="#d6d6d6"/>
<rect x="301.7" y="0" width="1" height="811" fill="#dadada"/>
<rect x="309.3" y="0" width="1" height="811" fill="#d6d6d6"/>
<rect x="318.2" y="0" width="1" height="811" fill="#dadada"/>
<rect x="325.8" y="0" width="1" height="811" fill="#d6d6d6"/>
<rect x="334.6" y="0" width="1" height="811" fill="#dadada"/>
<rect x="342.2" y="0" width="1" height="811" fill="#d6d6d6"/>
<rect x="351.0" y="0" width="1" height="811" fill="#dadada"/>
<rect x="358.6" y="0" width="1" height="811" fill="#d6d6d6"/>
<rect x="367.5" y="0" width="1" height="811" fill="#dadada"/>
<rect x="375.1" y="0" width="1" height="811" fill="#d6d6d6"/>
<rect x="383.9" y="0" width="1" height="811" fill="#dadada"/>
<rect x="391.5" y="0" width="1" height="811" fill="#d6d6d6"/>
<rect x="400.3" y="0" width="1" height="811" fill="#dadada"/>
<rect x="407.9" y="0" width="1" height="811" fill="#d6d6d6"/>
<rect x="416.8" y="0" width="1" height="811" fill="#dadada"/>
<rect x="424.3" y="0" width="1" height="811" fill="#d6d6d6"/>
<rect x="433.2" y="0" width="1" height="811" fill="#dadada"/>
<rect x="440.8" y="0" width="1" height="811" fill="#d6d6d6"/>
<rect x="449.6" y="0" width="1" height="811" fill="#dadada"/>
<rect x="457.2" y="0" width="1" height="811" fill="#d6d6d6"/>
<rect x="466.0" y="0" width="1" height="811" fill="#dadada"/>
<rect x="473.6" y="0" width="1" height="811" fill="#d6d6d6"/>
<rect x="482.5" y="0" width="1" height="811" fill="#dadada"/>
<rect x="490.1" y="0" width="1" height="811" fill="#d6d6d6"/>
<rect x="498.9" y="0" width="1" height="811" fill="#dadada"/>
<rect x="506.5" y="0" width="1" height="811" fill="#d6d6d6"/>
<rect x="515.3" y="0" width="1" height="811" fill="#dadada"/>
<rect x="522.9" y="0" width="1" height="811" fill="#d6d6d6"/>
<rect x="531.8" y="0" width="1" height="811" fill="#dadada"/>
<rect x="539.4" y="0" width="1" height="811" fill="#d6d6d6"/>
<rect x="548.2" y="0" width="1" height="811" fill="#dadada"/>
<rect x="555.8" y="0" width="1" height="811" fill="#d6d6d6"/>
<rect x="564.6" y="0" width="1" height="811" fill="#dadada"/>
<rect x="572.2" y="0" width="1" height="811" fill="#d6d6d6"/>
<rect x="597.5" y="0" width="1" height="811" fill="#dadada"/>
<rect x="605.1" y="0" width="1" height="811" fill="#d6d6d6"/>
<polygon points="380,585 735.5,585 735.5,706 402.7,590" fill="#4a4a4a"/>
<polygon points="603,660 617.5,665 617.5,811 603,811" fill="#c6c6c6"/>
<line x1="617.5" y1="585" x2="617.5" y2="811" stroke="#000" stroke-width="1"/>
<line x1="402.7" y1="590" x2="735.5" y2="706.5" stroke="#222" stroke-width="1"/>
<polygon points="735.5,585 783,585 783,669 735.5,704" fill="#bdbdbd" stroke="#222" stroke-width="1"/>

<line x1="0.0" y1="27.7" x2="49.6" y2="-10.0" stroke="#000" stroke-width="4.3" stroke-linecap="butt"/><line x1="0.0" y1="27.7" x2="49.6" y2="-10.0" stroke="#ff00ff" stroke-width="2.3" stroke-linecap="butt"/>
<line x1="0.0" y1="78.5" x2="116.4" y2="-10.0" stroke="#000" stroke-width="4.3" stroke-linecap="butt"/><line x1="0.0" y1="78.5" x2="116.4" y2="-10.0" stroke="#ff00ff" stroke-width="2.3" stroke-linecap="butt"/>
<line x1="0.0" y1="129.2" x2="183.2" y2="-10.0" stroke="#000" stroke-width="4.3" stroke-linecap="butt"/><line x1="0.0" y1="129.2" x2="183.2" y2="-10.0" stroke="#ff00ff" stroke-width="2.3" stroke-linecap="butt"/>
<line x1="0.0" y1="180.0" x2="250.0" y2="-10.0" stroke="#000" stroke-width="4.3" stroke-linecap="butt"/><line x1="0.0" y1="180.0" x2="250.0" y2="-10.0" stroke="#ff00ff" stroke-width="2.3" stroke-linecap="butt"/>
<line x1="0.0" y1="230.7" x2="316.8" y2="-10.0" stroke="#000" stroke-width="4.3" stroke-linecap="butt"/><line x1="0.0" y1="230.7" x2="316.8" y2="-10.0" stroke="#ff00ff" stroke-width="2.3" stroke-linecap="butt"/>
<line x1="0.0" y1="281.5" x2="383.6" y2="-10.0" stroke="#000" stroke-width="4.3" stroke-linecap="butt"/><line x1="0.0" y1="281.5" x2="383.6" y2="-10.0" stroke="#ff00ff" stroke-width="2.3" stroke-linecap="butt"/>
<line x1="0.0" y1="332.3" x2="450.3" y2="-10.0" stroke="#000" stroke-width="4.3" stroke-linecap="butt"/><line x1="0.0" y1="332.3" x2="450.3" y2="-10.0" stroke="#ff00ff" stroke-width="2.3" stroke-linecap="butt"/>
<line x1="0.0" y1="383.0" x2="517.1" y2="-10.0" stroke="#000" stroke-width="4.3" stroke-linecap="butt"/><line x1="0.0" y1="383.0" x2="517.1" y2="-10.0" stroke="#ff00ff" stroke-width="2.3" stroke-linecap="butt"/>
<line x1="0.0" y1="433.8" x2="554.0" y2="12.7" stroke="#000" stroke-width="4.3" stroke-linecap="butt"/><line x1="0.0" y1="433.8" x2="554.0" y2="12.7" stroke="#ff00ff" stroke-width="2.3" stroke-linecap="butt"/>
<line x1="0.0" y1="484.5" x2="554.0" y2="63.5" stroke="#000" stroke-width="4.3" stroke-linecap="butt"/><line x1="0.0" y1="484.5" x2="554.0" y2="63.5" stroke="#ff00ff" stroke-width="2.3" stroke-linecap="butt"/>
<line x1="0.0" y1="535.3" x2="554.0" y2="114.3" stroke="#000" stroke-width="4.3" stroke-linecap="butt"/><line x1="0.0" y1="535.3" x2="554.0" y2="114.3" stroke="#ff00ff" stroke-width="2.3" stroke-linecap="butt"/>
<line x1="0.0" y1="586.1" x2="554.0" y2="165.0" stroke="#000" stroke-width="4.3" stroke-linecap="butt"/><line x1="0.0" y1="586.1" x2="554.0" y2="165.0" stroke="#ff00ff" stroke-width="2.3" stroke-linecap="butt"/>
<line x1="0.0" y1="636.8" x2="554.0" y2="215.8" stroke="#000" stroke-width="4.3" stroke-linecap="butt"/><line x1="0.0" y1="636.8" x2="554.0" y2="215.8" stroke="#ff00ff" stroke-width="2.3" stroke-linecap="butt"/>
<line x1="0.0" y1="687.6" x2="554.0" y2="266.5" stroke="#000" stroke-width="4.3" stroke-linecap="butt"/><line x1="0.0" y1="687.6" x2="554.0" y2="266.5" stroke="#ff00ff" stroke-width="2.3" stroke-linecap="butt"/>
<line x1="0.0" y1="738.3" x2="554.0" y2="317.3" stroke="#000" stroke-width="4.3" stroke-linecap="butt"/><line x1="0.0" y1="738.3" x2="554.0" y2="317.3" stroke="#ff00ff" stroke-width="2.3" stroke-linecap="butt"/>
<line x1="0.0" y1="789.1" x2="554.0" y2="368.1" stroke="#000" stroke-width="4.3" stroke-linecap="butt"/><line x1="0.0" y1="789.1" x2="554.0" y2="368.1" stroke="#ff00ff" stroke-width="2.3" stroke-linecap="butt"/>
<line x1="24.8" y1="821.0" x2="554.0" y2="418.8" stroke="#000" stroke-width="4.3" stroke-linecap="butt"/><line x1="24.8" y1="821.0" x2="554.0" y2="418.8" stroke="#ff00ff" stroke-width="2.3" stroke-linecap="butt"/>
<line x1="91.6" y1="821.0" x2="554.0" y2="469.6" stroke="#000" stroke-width="4.3" stroke-linecap="butt"/><line x1="91.6" y1="821.0" x2="554.0" y2="469.6" stroke="#ff00ff" stroke-width="2.3" stroke-linecap="butt"/>
<line x1="158.4" y1="821.0" x2="554.0" y2="520.3" stroke="#000" stroke-width="4.3" stroke-linecap="butt"/><line x1="158.4" y1="821.0" x2="554.0" y2="520.3" stroke="#ff00ff" stroke-width="2.3" stroke-linecap="butt"/>
<line x1="225.2" y1="821.0" x2="554.0" y2="571.1" stroke="#000" stroke-width="4.3" stroke-linecap="butt"/><line x1="225.2" y1="821.0" x2="554.0" y2="571.1" stroke="#ff00ff" stroke-width="2.3" stroke-linecap="butt"/>
<line x1="292.0" y1="821.0" x2="554.0" y2="621.9" stroke="#000" stroke-width="4.3" stroke-linecap="butt"/><line x1="292.0" y1="821.0" x2="554.0" y2="621.9" stroke="#ff00ff" stroke-width="2.3" stroke-linecap="butt"/>
<line x1="358.8" y1="821.0" x2="554.0" y2="672.6" stroke="#000" stroke-width="4.3" stroke-linecap="butt"/><line x1="358.8" y1="821.0" x2="554.0" y2="672.6" stroke="#ff00ff" stroke-width="2.3" stroke-linecap="butt"/>
<line x1="425.6" y1="821.0" x2="554.0" y2="723.4" stroke="#000" stroke-width="4.3" stroke-linecap="butt"/><line x1="425.6" y1="821.0" x2="554.0" y2="723.4" stroke="#ff00ff" stroke-width="2.3" stroke-linecap="butt"/>
<line x1="492.3" y1="821.0" x2="554.0" y2="774.1" stroke="#000" stroke-width="4.3" stroke-linecap="butt"/><line x1="492.3" y1="821.0" x2="554.0" y2="774.1" stroke="#ff00ff" stroke-width="2.3" stroke-linecap="butt"/>
<rect x="7.4" y="0.0" width="5.6" height="811.0" fill="#000"/><rect x="8.3" y="0.0" width="3.8" height="811.0" fill="#4c0078"/><rect x="9.1" y="0.0" width="2.6" height="811.0" fill="#8c08d8"/>
<rect x="23.8" y="0.0" width="5.6" height="811.0" fill="#000"/><rect x="24.7" y="0.0" width="3.8" height="811.0" fill="#4c0078"/><rect x="25.5" y="0.0" width="2.6" height="811.0" fill="#8c08d8"/>
<rect x="40.3" y="0.0" width="5.6" height="811.0" fill="#000"/><rect x="41.2" y="0.0" width="3.8" height="811.0" fill="#4c0078"/><rect x="42.0" y="0.0" width="2.6" height="811.0" fill="#8c08d8"/>
<rect x="56.7" y="0.0" width="5.6" height="811.0" fill="#000"/><rect x="57.6" y="0.0" width="3.8" height="811.0" fill="#4c0078"/><rect x="58.4" y="0.0" width="2.6" height="811.0" fill="#8c08d8"/>
<rect x="73.1" y="0.0" width="5.6" height="811.0" fill="#000"/><rect x="74.0" y="0.0" width="3.8" height="811.0" fill="#4c0078"/><rect x="74.8" y="0.0" width="2.6" height="811.0" fill="#8c08d8"/>
<rect x="89.6" y="0.0" width="5.6" height="811.0" fill="#000"/><rect x="90.5" y="0.0" width="3.8" height="811.0" fill="#4c0078"/><rect x="91.2" y="0.0" width="2.6" height="811.0" fill="#8c08d8"/>
<rect x="106.0" y="0.0" width="5.6" height="811.0" fill="#000"/><rect x="106.9" y="0.0" width="3.8" height="811.0" fill="#4c0078"/><rect x="107.7" y="0.0" width="2.6" height="811.0" fill="#8c08d8"/>
<rect x="122.4" y="0.0" width="5.6" height="811.0" fill="#000"/><rect x="123.3" y="0.0" width="3.8" height="811.0" fill="#4c0078"/><rect x="124.1" y="0.0" width="2.6" height="811.0" fill="#8c08d8"/>
<rect x="138.8" y="0.0" width="5.6" height="811.0" fill="#000"/><rect x="139.7" y="0.0" width="3.8" height="811.0" fill="#4c0078"/><rect x="140.5" y="0.0" width="2.6" height="811.0" fill="#8c08d8"/>
<rect x="155.3" y="0.0" width="5.6" height="811.0" fill="#000"/><rect x="156.2" y="0.0" width="3.8" height="811.0" fill="#4c0078"/><rect x="157.0" y="0.0" width="2.6" height="811.0" fill="#8c08d8"/>
<rect x="171.7" y="0.0" width="5.6" height="811.0" fill="#000"/><rect x="172.6" y="0.0" width="3.8" height="811.0" fill="#4c0078"/><rect x="173.4" y="0.0" width="2.6" height="811.0" fill="#8c08d8"/>
<rect x="188.1" y="0.0" width="5.6" height="811.0" fill="#000"/><rect x="189.0" y="0.0" width="3.8" height="811.0" fill="#4c0078"/><rect x="189.8" y="0.0" width="2.6" height="811.0" fill="#8c08d8"/>
<rect x="204.6" y="0.0" width="5.6" height="811.0" fill="#000"/><rect x="205.5" y="0.0" width="3.8" height="811.0" fill="#4c0078"/><rect x="206.3" y="0.0" width="2.6" height="811.0" fill="#8c08d8"/>
<rect x="221.0" y="0.0" width="5.6" height="811.0" fill="#000"/><rect x="221.9" y="0.0" width="3.8" height="811.0" fill="#4c0078"/><rect x="222.7" y="0.0" width="2.6" height="811.0" fill="#8c08d8"/>
<rect x="237.4" y="0.0" width="5.6" height="811.0" fill="#000"/><rect x="238.3" y="0.0" width="3.8" height="811.0" fill="#4c0078"/><rect x="239.1" y="0.0" width="2.6" height="811.0" fill="#8c08d8"/>
<rect x="253.8" y="0.0" width="5.6" height="811.0" fill="#000"/><rect x="254.7" y="0.0" width="3.8" height="811.0" fill="#4c0078"/><rect x="255.5" y="0.0" width="2.6" height="811.0" fill="#8c08d8"/>
<rect x="270.3" y="0.0" width="5.6" height="811.0" fill="#000"/><rect x="271.2" y="0.0" width="3.8" height="811.0" fill="#4c0078"/><rect x="272.0" y="0.0" width="2.6" height="811.0" fill="#8c08d8"/>
<rect x="286.7" y="0.0" width="5.6" height="811.0" fill="#000"/><rect x="287.6" y="0.0" width="3.8" height="811.0" fill="#4c0078"/><rect x="288.4" y="0.0" width="2.6" height="811.0" fill="#8c08d8"/>
<rect x="303.1" y="0.0" width="5.6" height="811.0" fill="#000"/><rect x="304.0" y="0.0" width="3.8" height="811.0" fill="#4c0078"/><rect x="304.8" y="0.0" width="2.6" height="811.0" fill="#8c08d8"/>
<rect x="319.6" y="0.0" width="5.6" height="811.0" fill="#000"/><rect x="320.5" y="0.0" width="3.8" height="811.0" fill="#4c0078"/><rect x="321.3" y="0.0" width="2.6" height="811.0" fill="#8c08d8"/>
<rect x="336.0" y="0.0" width="5.6" height="811.0" fill="#000"/><rect x="336.9" y="0.0" width="3.8" height="811.0" fill="#4c0078"/><rect x="337.7" y="0.0" width="2.6" height="811.0" fill="#8c08d8"/>
<rect x="352.4" y="0.0" width="5.6" height="811.0" fill="#000"/><rect x="353.3" y="0.0" width="3.8" height="811.0" fill="#4c0078"/><rect x="354.1" y="0.0" width="2.6" height="811.0" fill="#8c08d8"/>
<rect x="368.9" y="0.0" width="5.6" height="811.0" fill="#000"/><rect x="369.8" y="0.0" width="3.8" height="811.0" fill="#4c0078"/><rect x="370.6" y="0.0" width="2.6" height="811.0" fill="#8c08d8"/>
<rect x="385.3" y="0.0" width="5.6" height="811.0" fill="#000"/><rect x="386.2" y="0.0" width="3.8" height="811.0" fill="#4c0078"/><rect x="387.0" y="0.0" width="2.6" height="811.0" fill="#8c08d8"/>
<rect x="401.7" y="0.0" width="5.6" height="811.0" fill="#000"/><rect x="402.6" y="0.0" width="3.8" height="811.0" fill="#4c0078"/><rect x="403.4" y="0.0" width="2.6" height="811.0" fill="#8c08d8"/>
<rect x="418.1" y="0.0" width="5.6" height="811.0" fill="#000"/><rect x="419.1" y="0.0" width="3.8" height="811.0" fill="#4c0078"/><rect x="419.9" y="0.0" width="2.6" height="811.0" fill="#8c08d8"/>
<rect x="434.6" y="0.0" width="5.6" height="811.0" fill="#000"/><rect x="435.5" y="0.0" width="3.8" height="811.0" fill="#4c0078"/><rect x="436.3" y="0.0" width="2.6" height="811.0" fill="#8c08d8"/>
<rect x="451.0" y="0.0" width="5.6" height="811.0" fill="#000"/><rect x="451.9" y="0.0" width="3.8" height="811.0" fill="#4c0078"/><rect x="452.7" y="0.0" width="2.6" height="811.0" fill="#8c08d8"/>
<rect x="467.4" y="0.0" width="5.6" height="811.0" fill="#000"/><rect x="468.3" y="0.0" width="3.8" height="811.0" fill="#4c0078"/><rect x="469.1" y="0.0" width="2.6" height="811.0" fill="#8c08d8"/>
<rect x="483.9" y="0.0" width="5.6" height="811.0" fill="#000"/><rect x="484.8" y="0.0" width="3.8" height="811.0" fill="#4c0078"/><rect x="485.6" y="0.0" width="2.6" height="811.0" fill="#8c08d8"/>
<rect x="500.3" y="0.0" width="5.6" height="811.0" fill="#000"/><rect x="501.2" y="0.0" width="3.8" height="811.0" fill="#4c0078"/><rect x="502.0" y="0.0" width="2.6" height="811.0" fill="#8c08d8"/>
<rect x="516.7" y="0.0" width="5.6" height="811.0" fill="#000"/><rect x="517.6" y="0.0" width="3.8" height="811.0" fill="#4c0078"/><rect x="518.4" y="0.0" width="2.6" height="811.0" fill="#8c08d8"/>
<rect x="533.2" y="0.0" width="5.6" height="811.0" fill="#000"/><rect x="534.1" y="0.0" width="3.8" height="811.0" fill="#4c0078"/><rect x="534.9" y="0.0" width="2.6" height="811.0" fill="#8c08d8"/>
<rect x="549.6" y="0.0" width="5.6" height="811.0" fill="#000"/><rect x="550.5" y="0.0" width="3.8" height="811.0" fill="#4c0078"/><rect x="551.3" y="0.0" width="2.6" height="811.0" fill="#8c08d8"/>
<rect x="566.0" y="0.0" width="5.6" height="811.0" fill="#000"/><rect x="566.9" y="0.0" width="3.8" height="811.0" fill="#4c0078"/><rect x="567.7" y="0.0" width="2.6" height="811.0" fill="#8c08d8"/>
<rect x="598.9" y="0.0" width="5.6" height="811.0" fill="#000"/><rect x="599.8" y="0.0" width="3.8" height="811.0" fill="#4c0078"/><rect x="600.6" y="0.0" width="2.6" height="811.0" fill="#8c08d8"/>
<line x1="0.0" y1="37.5" x2="62.5" y2="-10.0" stroke="#000" stroke-width="4.4" stroke-linecap="round"/><line x1="0.0" y1="37.5" x2="62.5" y2="-10.0" stroke="#ff00ff" stroke-width="2.4" stroke-linecap="round"/>
<line x1="0.0" y1="88.3" x2="129.3" y2="-10.0" stroke="#000" stroke-width="4.4" stroke-linecap="round"/><line x1="0.0" y1="88.3" x2="129.3" y2="-10.0" stroke="#ff00ff" stroke-width="2.4" stroke-linecap="round"/>
<line x1="0.0" y1="139.0" x2="196.1" y2="-10.0" stroke="#000" stroke-width="4.4" stroke-linecap="round"/><line x1="0.0" y1="139.0" x2="196.1" y2="-10.0" stroke="#ff00ff" stroke-width="2.4" stroke-linecap="round"/>
<line x1="0.0" y1="189.8" x2="262.9" y2="-10.0" stroke="#000" stroke-width="4.4" stroke-linecap="round"/><line x1="0.0" y1="189.8" x2="262.9" y2="-10.0" stroke="#ff00ff" stroke-width="2.4" stroke-linecap="round"/>
<line x1="0.0" y1="240.5" x2="329.7" y2="-10.0" stroke="#000" stroke-width="4.4" stroke-linecap="round"/><line x1="0.0" y1="240.5" x2="329.7" y2="-10.0" stroke="#ff00ff" stroke-width="2.4" stroke-linecap="round"/>
<line x1="0.0" y1="291.3" x2="396.4" y2="-10.0" stroke="#000" stroke-width="4.4" stroke-linecap="round"/><line x1="0.0" y1="291.3" x2="396.4" y2="-10.0" stroke="#ff00ff" stroke-width="2.4" stroke-linecap="round"/>
<line x1="0.0" y1="342.1" x2="463.2" y2="-10.0" stroke="#000" stroke-width="4.4" stroke-linecap="round"/><line x1="0.0" y1="342.1" x2="463.2" y2="-10.0" stroke="#ff00ff" stroke-width="2.4" stroke-linecap="round"/>
<line x1="0.0" y1="392.8" x2="530.0" y2="-10.0" stroke="#000" stroke-width="4.4" stroke-linecap="round"/><line x1="0.0" y1="392.8" x2="530.0" y2="-10.0" stroke="#ff00ff" stroke-width="2.4" stroke-linecap="round"/>
<line x1="0.0" y1="443.6" x2="596.8" y2="-10.0" stroke="#000" stroke-width="4.4" stroke-linecap="round"/><line x1="0.0" y1="443.6" x2="596.8" y2="-10.0" stroke="#ff00ff" stroke-width="2.4" stroke-linecap="round"/>
<line x1="0.0" y1="494.3" x2="607.0" y2="33.0" stroke="#000" stroke-width="4.4" stroke-linecap="round"/><line x1="0.0" y1="494.3" x2="607.0" y2="33.0" stroke="#ff00ff" stroke-width="2.4" stroke-linecap="round"/>
<line x1="0.0" y1="545.1" x2="607.0" y2="83.8" stroke="#000" stroke-width="4.4" stroke-linecap="round"/><line x1="0.0" y1="545.1" x2="607.0" y2="83.8" stroke="#ff00ff" stroke-width="2.4" stroke-linecap="round"/>
<line x1="0.0" y1="595.9" x2="607.0" y2="134.5" stroke="#000" stroke-width="4.4" stroke-linecap="round"/><line x1="0.0" y1="595.9" x2="607.0" y2="134.5" stroke="#ff00ff" stroke-width="2.4" stroke-linecap="round"/>
<line x1="0.0" y1="646.6" x2="607.0" y2="185.3" stroke="#000" stroke-width="4.4" stroke-linecap="round"/><line x1="0.0" y1="646.6" x2="607.0" y2="185.3" stroke="#ff00ff" stroke-width="2.4" stroke-linecap="round"/>
<line x1="0.0" y1="697.4" x2="607.0" y2="236.1" stroke="#000" stroke-width="4.4" stroke-linecap="round"/><line x1="0.0" y1="697.4" x2="607.0" y2="236.1" stroke="#ff00ff" stroke-width="2.4" stroke-linecap="round"/>
<line x1="0.0" y1="748.1" x2="607.0" y2="286.8" stroke="#000" stroke-width="4.4" stroke-linecap="round"/><line x1="0.0" y1="748.1" x2="607.0" y2="286.8" stroke="#ff00ff" stroke-width="2.4" stroke-linecap="round"/>
<line x1="0.0" y1="798.9" x2="607.0" y2="337.6" stroke="#000" stroke-width="4.4" stroke-linecap="round"/><line x1="0.0" y1="798.9" x2="607.0" y2="337.6" stroke="#ff00ff" stroke-width="2.4" stroke-linecap="round"/>
<line x1="37.7" y1="821.0" x2="607.0" y2="388.3" stroke="#000" stroke-width="4.4" stroke-linecap="round"/><line x1="37.7" y1="821.0" x2="607.0" y2="388.3" stroke="#ff00ff" stroke-width="2.4" stroke-linecap="round"/>
<line x1="104.5" y1="821.0" x2="607.0" y2="439.1" stroke="#000" stroke-width="4.4" stroke-linecap="round"/><line x1="104.5" y1="821.0" x2="607.0" y2="439.1" stroke="#ff00ff" stroke-width="2.4" stroke-linecap="round"/>
<line x1="171.3" y1="821.0" x2="607.0" y2="489.9" stroke="#000" stroke-width="4.4" stroke-linecap="round"/><line x1="171.3" y1="821.0" x2="607.0" y2="489.9" stroke="#ff00ff" stroke-width="2.4" stroke-linecap="round"/>
<line x1="238.1" y1="821.0" x2="607.0" y2="540.6" stroke="#000" stroke-width="4.4" stroke-linecap="round"/><line x1="238.1" y1="821.0" x2="607.0" y2="540.6" stroke="#ff00ff" stroke-width="2.4" stroke-linecap="round"/>
<line x1="304.9" y1="821.0" x2="607.0" y2="591.4" stroke="#000" stroke-width="4.4" stroke-linecap="round"/><line x1="304.9" y1="821.0" x2="607.0" y2="591.4" stroke="#ff00ff" stroke-width="2.4" stroke-linecap="round"/>
<line x1="371.7" y1="821.0" x2="607.0" y2="642.1" stroke="#000" stroke-width="4.4" stroke-linecap="round"/><line x1="371.7" y1="821.0" x2="607.0" y2="642.1" stroke="#ff00ff" stroke-width="2.4" stroke-linecap="round"/>
<line x1="438.4" y1="821.0" x2="607.0" y2="692.9" stroke="#000" stroke-width="4.4" stroke-linecap="round"/><line x1="438.4" y1="821.0" x2="607.0" y2="692.9" stroke="#ff00ff" stroke-width="2.4" stroke-linecap="round"/>
<line x1="505.2" y1="821.0" x2="607.0" y2="743.7" stroke="#000" stroke-width="4.4" stroke-linecap="round"/><line x1="505.2" y1="821.0" x2="607.0" y2="743.7" stroke="#ff00ff" stroke-width="2.4" stroke-linecap="round"/>
<line x1="572.0" y1="821.0" x2="607.0" y2="794.4" stroke="#000" stroke-width="4.4" stroke-linecap="round"/><line x1="572.0" y1="821.0" x2="607.0" y2="794.4" stroke="#ff00ff" stroke-width="2.4" stroke-linecap="round"/>
<line x1="509.6" y1="603.0" x2="540.3" y2="583.4" stroke="#000" stroke-width="3.6" stroke-linecap="round"/><line x1="509.6" y1="603.0" x2="540.3" y2="583.4" stroke="#33e010" stroke-width="2.0" stroke-linecap="round"/>
<line x1="548.2" y1="616.9" x2="578.9" y2="597.3" stroke="#000" stroke-width="3.6" stroke-linecap="round"/><line x1="548.2" y1="616.9" x2="578.9" y2="597.3" stroke="#33e010" stroke-width="2.0" stroke-linecap="round"/>
<line x1="586.6" y1="630.7" x2="617.3" y2="611.1" stroke="#000" stroke-width="3.6" stroke-linecap="round"/><line x1="586.6" y1="630.7" x2="617.3" y2="611.1" stroke="#33e010" stroke-width="2.0" stroke-linecap="round"/>
<line x1="625.0" y1="644.5" x2="655.7" y2="625.0" stroke="#000" stroke-width="3.6" stroke-linecap="round"/><line x1="625.0" y1="644.5" x2="655.7" y2="625.0" stroke="#33e010" stroke-width="2.0" stroke-linecap="round"/>
<line x1="663.4" y1="658.3" x2="694.1" y2="638.8" stroke="#000" stroke-width="3.6" stroke-linecap="round"/><line x1="663.4" y1="658.3" x2="694.1" y2="638.8" stroke="#33e010" stroke-width="2.0" stroke-linecap="round"/>
<line x1="701.8" y1="672.1" x2="732.5" y2="652.6" stroke="#000" stroke-width="3.6" stroke-linecap="round"/><line x1="701.8" y1="672.1" x2="732.5" y2="652.6" stroke="#33e010" stroke-width="2.0" stroke-linecap="round"/>
<line x1="558.7" y1="588.0" x2="768.7" y2="663.6" stroke="#000" stroke-width="6.2" stroke-linecap="round"/><line x1="558.7" y1="588.0" x2="768.7" y2="663.6" stroke="#33e010" stroke-width="4.0" stroke-linecap="round"/>
<line x1="558.7" y1="587.0" x2="768.7" y2="662.6" stroke="#8cff60" stroke-width="1" stroke-linecap="round"/>
<line x1="558.7" y1="589.4" x2="768.7" y2="665.0" stroke="#1c9a00" stroke-width="1" stroke-linecap="round"/>
<line x1="512.8" y1="588.0" x2="753.0" y2="674.5" stroke="#000" stroke-width="6.2" stroke-linecap="round"/><line x1="512.8" y1="588.0" x2="753.0" y2="674.5" stroke="#33e010" stroke-width="4.0" stroke-linecap="round"/>
<line x1="512.8" y1="587.0" x2="753.0" y2="673.5" stroke="#8cff60" stroke-width="1" stroke-linecap="round"/>
<line x1="512.8" y1="589.4" x2="753.0" y2="675.9" stroke="#1c9a00" stroke-width="1" stroke-linecap="round"/>
<line x1="459.7" y1="588.0" x2="735.5" y2="687.3" stroke="#000" stroke-width="6.2" stroke-linecap="round"/><line x1="459.7" y1="588.0" x2="735.5" y2="687.3" stroke="#33e010" stroke-width="4.0" stroke-linecap="round"/>
<line x1="459.7" y1="587.0" x2="735.5" y2="686.3" stroke="#8cff60" stroke-width="1" stroke-linecap="round"/>
<line x1="459.7" y1="589.4" x2="735.5" y2="688.7" stroke="#1c9a00" stroke-width="1" stroke-linecap="round"/>
<line x1="498.7" y1="588.0" x2="498.7" y2="603.0" stroke="#000" stroke-width="3.8" stroke-linecap="round"/><line x1="498.7" y1="588.0" x2="498.7" y2="603.0" stroke="#33e010" stroke-width="2.2" stroke-linecap="round"/>
<line x1="494.7" y1="588.0" x2="494.7" y2="567.0" stroke="#000" stroke-width="3.6" stroke-linecap="round"/><line x1="494.7" y1="588.0" x2="494.7" y2="567.0" stroke="#33e010" stroke-width="2.0" stroke-linecap="round"/>
<line x1="537.3" y1="588.0" x2="537.3" y2="616.9" stroke="#000" stroke-width="3.8" stroke-linecap="round"/><line x1="537.3" y1="588.0" x2="537.3" y2="616.9" stroke="#33e010" stroke-width="2.2" stroke-linecap="round"/>
<line x1="533.3" y1="588.0" x2="533.3" y2="580.9" stroke="#000" stroke-width="3.6" stroke-linecap="round"/><line x1="533.3" y1="588.0" x2="533.3" y2="580.9" stroke="#33e010" stroke-width="2.0" stroke-linecap="round"/>
<line x1="576.5" y1="588.0" x2="576.5" y2="631.0" stroke="#000" stroke-width="3.8" stroke-linecap="round"/><line x1="576.5" y1="588.0" x2="576.5" y2="631.0" stroke="#33e010" stroke-width="2.2" stroke-linecap="round"/>
<line x1="572.5" y1="588.0" x2="572.5" y2="595.0" stroke="#000" stroke-width="3.6" stroke-linecap="round"/><line x1="572.5" y1="588.0" x2="572.5" y2="595.0" stroke="#33e010" stroke-width="2.0" stroke-linecap="round"/>
<line x1="615.5" y1="588.0" x2="615.5" y2="645.1" stroke="#000" stroke-width="3.8" stroke-linecap="round"/><line x1="615.5" y1="588.0" x2="615.5" y2="645.1" stroke="#33e010" stroke-width="2.2" stroke-linecap="round"/>
<line x1="611.5" y1="588.0" x2="611.5" y2="609.0" stroke="#000" stroke-width="3.6" stroke-linecap="round"/><line x1="611.5" y1="588.0" x2="611.5" y2="609.0" stroke="#33e010" stroke-width="2.0" stroke-linecap="round"/>
<line x1="654.5" y1="588.0" x2="654.5" y2="659.1" stroke="#000" stroke-width="3.8" stroke-linecap="round"/><line x1="654.5" y1="588.0" x2="654.5" y2="659.1" stroke="#33e010" stroke-width="2.2" stroke-linecap="round"/>
<line x1="650.5" y1="588.0" x2="650.5" y2="623.1" stroke="#000" stroke-width="3.6" stroke-linecap="round"/><line x1="650.5" y1="588.0" x2="650.5" y2="623.1" stroke="#33e010" stroke-width="2.0" stroke-linecap="round"/>
<line x1="694.0" y1="588.0" x2="694.0" y2="673.3" stroke="#000" stroke-width="3.8" stroke-linecap="round"/><line x1="694.0" y1="588.0" x2="694.0" y2="673.3" stroke="#33e010" stroke-width="2.2" stroke-linecap="round"/>
<line x1="690.0" y1="588.0" x2="690.0" y2="637.3" stroke="#000" stroke-width="3.6" stroke-linecap="round"/><line x1="690.0" y1="588.0" x2="690.0" y2="637.3" stroke="#33e010" stroke-width="2.0" stroke-linecap="round"/>
<line x1="733.5" y1="588.0" x2="733.5" y2="687.6" stroke="#000" stroke-width="3.8" stroke-linecap="round"/><line x1="733.5" y1="588.0" x2="733.5" y2="687.6" stroke="#33e010" stroke-width="2.2" stroke-linecap="round"/>
<line x1="729.5" y1="588.0" x2="729.5" y2="651.5" stroke="#000" stroke-width="3.6" stroke-linecap="round"/><line x1="729.5" y1="588.0" x2="729.5" y2="651.5" stroke="#33e010" stroke-width="2.0" stroke-linecap="round"/>
<line x1="767.5" y1="588.0" x2="767.5" y2="661.0" stroke="#000" stroke-width="3.6" stroke-linecap="round"/><line x1="767.5" y1="588.0" x2="767.5" y2="661.0" stroke="#33e010" stroke-width="2.0" stroke-linecap="round"/>
<line x1="735.5" y1="687.3" x2="768.7" y2="662.0" stroke="#000" stroke-width="4.0" stroke-linecap="round"/><line x1="735.5" y1="687.3" x2="768.7" y2="662.0" stroke="#33e010" stroke-width="2.4" stroke-linecap="round"/>
<g opacity="0.3">
<ellipse cx="1190" cy="98" rx="55" ry="26" fill="none" stroke="#ffffff" stroke-width="7"/>
<ellipse cx="1190" cy="98" rx="55" ry="26" fill="none" stroke="#777" stroke-width="0.8"/>
<polygon points="1163,62 1200,44 1203,44 1203,112 1186,110 1165,104" fill="#f4f4f4"/>
<polygon points="1186,110 1203,112 1203,128 1190,126" fill="#d8d8d8"/>
<text x="1188" y="96" font-family="Liberation Sans" font-size="10" fill="#555" transform="rotate(18 1188 96)">LEFT</text>
</g>
<rect x="0" y="0" width="618" height="1.6" fill="#000"/>
<rect x="892" y="0" width="311" height="1.6" fill="#000"/>
<rect x="0" y="0" width="1.1" height="811" fill="#000"/>
<rect x="0" y="808.6" width="618" height="2.4" fill="#000"/>
<path d="M0,0 H10 Q1.6,1.6 0,10 Z" fill="#000"/>
<path d="M0,0 L12,0 Q1.5,1.5 0,12 Z" fill="#000"/>
<path d="M0,811 L12,811 Q1.5,809.5 0,799 Z" fill="#000"/>
<rect x="1201.8" y="751" width="1.2" height="60" fill="#000"/>
<rect x="1149" y="809.8" width="54" height="1.2" fill="#000"/>
<path d="M685.4,738.5 L685.4,754.3 L688.7,751.2 L691.3,757.1 L693.5,756.1 L691.1,750.7 L696.9,750.4 Z" fill="#fff" stroke="#444" stroke-width="0.9" stroke-linejoin="round"/>
</svg>
<div class="b" style="left:142px;top:58px;width:671px;height:533px;background:#fff;border:1px solid #a8a8a8;border-radius:4px 4px 0 0"></div>
<svg style="left:150px;top:62px" width="90" height="30" viewBox="0 0 90 30"><path d="M13.3,6.1 L21.7,10.8 V20.4 L13.3,25.1 L5,20.4 V10.8 Z" fill="#3f82cc"/><path d="M10.4,20.4 V10.8 L16.2,20.4 V10.8" stroke="#fff" stroke-width="2.1" fill="none" stroke-linejoin="bevel"/><path d="M26.9,20.2 V11.2 L32.9,20.2 V11.2 M35.2,20.2 L39.3,11.2 L43.4,20.2 M42.6,11.2 L46.7,20.2 L50.9,11.2 M54.8,11.2 V20.2 M57.6,20.2 L61.7,11.2 L65.8,20.2 M63.6,11.9 H70.5 M67,11.9 V20.2 M77,11.9 H72.4 V19.5 H77.2 M72.4,15.8 H76.6" stroke="#262626" stroke-width="1.85" fill="none" stroke-linejoin="bevel"/><circle cx="78.3" cy="9.8" r="0.8" fill="#666"/></svg>
<div class="t" style="left:397px;top:69.85px;font-size:11.9px;color:#3a3a3a;">Connection Reinforcement</div>
<svg style="left:700px;top:62px" width="110" height="32" viewBox="700 62 110 32"><circle cx="715.2" cy="77.8" r="8.6" fill="none" stroke="#3b76bb" stroke-width="1.7"/><circle cx="715.2" cy="73.3" r="1.2" fill="#3b76bb"/><path d="M713.2,76 H715.9 V81.6 M712.8,81.8 H718" stroke="#3b76bb" stroke-width="1.6" fill="none"/><circle cx="741.5" cy="77.8" r="8.6" fill="none" stroke="#606060" stroke-width="1.8"/><path d="M736.6,77.8 H746.4" stroke="#555" stroke-width="1.8"/><circle cx="766.9" cy="77.8" r="8.6" fill="none" stroke="#ececec" stroke-width="1.7"/><path d="M763,75.6 V82.3 H769.7 Z M765.5,74.1 H772.2 V80.8 Z" fill="#ececec"/><circle cx="793.1" cy="77.8" r="8.6" fill="none" stroke="#606060" stroke-width="1.8"/><path d="M789.6,74.3 L796.6,81.3 M796.6,74.3 L789.6,81.3" stroke="#555" stroke-width="1.9"/></svg>
<div class="t" style="left:155.2px;top:107.49px;font-size:12px;color:#404040;">Connection type:</div>
<div class="b" style="left:153.5px;top:125.5px;width:193px;height:322.5px;border:1px solid #8e8e8e"></div>
<div class="b" style="left:162.6px;top:137.1px;width:80px;height:80px;background:#ffffff;border:1px solid #c9c9c9;border-radius:4px"></div><svg style="left:162.6px;top:137.1px;overflow:visible" width="80" height="80" viewBox="0 0 80 80"><rect x="30" y="4.7" width="20" height="71.1" fill="#e0e1e1"/><rect x="4.7" y="29.6" width="70.7" height="21.0" fill="#e0e1e1"/><path d="M32,4.7V75.8 M48,4.7V75.8" stroke="#b4b6b8" stroke-width="1.2"/><path d="M4.7,31.5H75.4 M4.7,48.5H75.4" stroke="#b4b6b8" stroke-width="1.2"/><path d="M34,21.3V58.5 M47.4,21.3V58.5" stroke="#c8102e" stroke-width="1.8"/><path d="M34,13.8 v5 M34,16.3 H47.4 M47.4,13.8 v5" stroke="#555" stroke-width="1" fill="none"/><text x="40.7" y="14.2" font-family="Liberation Sans" font-size="10.5" fill="#3a3a3a" text-anchor="middle">S</text><path d="M29.0,21.3 h-2.5 V29.5 h2.5" stroke="#555" stroke-width="1" fill="none"/><text x="20.5" y="30" font-family="Liberation Sans" font-size="10.5" fill="#3a3a3a" text-anchor="middle">O</text><path d="M29.0,51.5 h-2.5 V58.5 h2.5" stroke="#555" stroke-width="1" fill="none"/><text x="20.5" y="59.3" font-family="Liberation Sans" font-size="10.5" fill="#3a3a3a" text-anchor="middle">O</text><path d="M64.1,21.3 h5 M66.6,21.3 V58.5 M64.1,58.5 h5" stroke="#555" stroke-width="1" fill="none"/><text x="71" y="46" font-family="Liberation Sans" font-size="10.5" fill="#3a3a3a" text-anchor="middle">L</text></svg>
<div class="b" style="left:256.3px;top:137.1px;width:80px;height:80px;background:#ffffff;border:1px solid #c9c9c9;border-radius:4px"></div><svg style="left:256.3px;top:137.1px;overflow:visible" width="80" height="80" viewBox="0 0 80 80"><rect x="29" y="33.2" width="22.1" height="41.8" fill="#e0e1e1"/><path d="M31,60V75 M49,60V75" stroke="#b4b6b8" stroke-width="1.2"/><path d="M31.4,61.6V28 Q31.4,21.3 38,21.3 H42 Q48.5,21.3 48.5,28 V61.6" stroke="#c8102e" stroke-width="1.8" fill="none"/><path d="M31.4,13.8 v5 M31.4,16.3 H48.5 M48.5,13.8 v5" stroke="#555" stroke-width="1" fill="none"/><text x="40" y="14.2" font-family="Liberation Sans" font-size="10.5" fill="#3a3a3a" text-anchor="middle">S</text><path d="M33.0,21.3 h-2.5 V31 h2.5" stroke="#555" stroke-width="1" fill="none"/><text x="25" y="31" font-family="Liberation Sans" font-size="10.5" fill="#3a3a3a" text-anchor="middle">O</text><path d="M54.2,21.3 h5 M56.7,21.3 V61.6 M54.2,61.6 h5" stroke="#555" stroke-width="1" fill="none"/><text x="61" y="46" font-family="Liberation Sans" font-size="10.5" fill="#3a3a3a" text-anchor="middle">L</text></svg>
<div class="b" style="left:162.6px;top:227.3px;width:80px;height:80px;background:#ffffff;border:1px solid #c9c9c9;border-radius:4px"></div><svg style="left:162.6px;top:227.3px;overflow:visible" width="80" height="80" viewBox="0 0 80 80"><rect x="31" y="9.5" width="22" height="34.0" fill="#e0e1e1"/><rect x="4.7" y="42" width="70.3" height="18" fill="#e0e1e1"/><path d="M4.7,43.5H75 M4.7,58.5H75" stroke="#b4b6b8" stroke-width="1.2"/><path d="M33,9.5V15 M51,9.5V15" stroke="#b4b6b8" stroke-width="1.2"/><path d="M34,15V49 Q34,55.3 40,55.3 H45.3 Q51.3,55.3 51.3,49 V15" stroke="#c8102e" stroke-width="1.8" fill="none"/><path d="M28.5,15 h-2.5 V42 h2.5" stroke="#555" stroke-width="1" fill="none"/><text x="21.5" y="33" font-family="Liberation Sans" font-size="10.5" fill="#3a3a3a" text-anchor="middle">O</text><path d="M63.5,15 h5 M66,15 V55.3 M63.5,55.3 h5" stroke="#555" stroke-width="1" fill="none"/><text x="71" y="41" font-family="Liberation Sans" font-size="10.5" fill="#3a3a3a" text-anchor="middle">L</text><path d="M34,61.8 v5 M34,64.3 H51.3 M51.3,61.8 v5" stroke="#555" stroke-width="1" fill="none"/><text x="42.5" y="75" font-family="Liberation Sans" font-size="10.5" fill="#3a3a3a" text-anchor="middle">S</text></svg>
<div class="b" style="left:256.3px;top:227.3px;width:80px;height:80px;background:#ffffff;border:1px solid #c9c9c9;border-radius:4px"></div><svg style="left:256.3px;top:227.3px;overflow:visible" width="80" height="80" viewBox="0 0 80 80"><rect x="31" y="12.6" width="18.6" height="32.4" fill="#e0e1e1"/><rect x="4.5" y="43" width="70.3" height="17" fill="#e0e1e1"/><path d="M4.5,44.5H74.8 M4.5,58.5H74.8" stroke="#b4b6b8" stroke-width="1.2"/><path d="M33,12.6V24 M48,12.6V24" stroke="#b4b6b8" stroke-width="1.2"/><path d="M33.8,24.2V52 Q33.8,57 28.8,57 H17.2 M47.2,24.2V52 Q47.2,57 52.2,57 H63.8" stroke="#c8102e" stroke-width="1.8" fill="none"/><path d="M33.8,13.8 v5 M33.8,16.3 H47.2 M47.2,13.8 v5" stroke="#555" stroke-width="1" fill="none"/><text x="40.5" y="14.2" font-family="Liberation Sans" font-size="10.5" fill="#3a3a3a" text-anchor="middle">S</text><path d="M32.5,24.2 h-2.5 V43 h2.5" stroke="#555" stroke-width="1" fill="none"/><text x="22" y="40" font-family="Liberation Sans" font-size="10.5" fill="#3a3a3a" text-anchor="middle">O</text><path d="M63.5,24.2 h5 M66,24.2 V57 M63.5,57 h5" stroke="#555" stroke-width="1" fill="none"/><text x="70.5" y="42" font-family="Liberation Sans" font-size="10.5" fill="#3a3a3a" text-anchor="middle">L</text><path d="M17.2,62.3 v5 M17.2,64.8 H33.8 M33.8,62.3 v5" stroke="#555" stroke-width="1" fill="none"/><text x="26" y="75" font-family="Liberation Sans" font-size="10.5" fill="#3a3a3a" text-anchor="middle">B</text></svg>
<div class="b" style="left:162.6px;top:317.1px;width:80px;height:80px;background:#c7dbf1;border:1px solid #a9c3e3;border-radius:4px"></div><svg style="left:162.6px;top:317.1px;overflow:visible" width="80" height="80" viewBox="0 0 80 80"><rect x="32" y="12" width="16" height="32" fill="#e0e1e1"/><rect x="5" y="42.7" width="71" height="15.899999999999999" fill="#e0e1e1"/><path d="M5,44H76 M5,57.2H76" stroke="#b4b6b8" stroke-width="1.2"/><path d="M34,22V49 Q34,55 40,55 H42 Q48,55 48,49 V22 M19,55.5H62" stroke="#c8102e" stroke-width="1.8" fill="none"/><path d="M34,12.1 v5 M34,14.6 H48 M48,12.1 v5" stroke="#555" stroke-width="1" fill="none"/><text x="41" y="13" font-family="Liberation Sans" font-size="10.5" fill="#3a3a3a" text-anchor="middle">S</text><path d="M28.5,22 h-2.5 V42 h2.5" stroke="#555" stroke-width="1" fill="none"/><text x="21.5" y="37" font-family="Liberation Sans" font-size="10.5" fill="#3a3a3a" text-anchor="middle">O</text><path d="M64.1,22 h5 M66.6,22 V55 M64.1,55 h5" stroke="#555" stroke-width="1" fill="none"/><text x="71" y="43" font-family="Liberation Sans" font-size="10.5" fill="#3a3a3a" text-anchor="middle">L</text><path d="M19,60.5 v5 M19,63 H43 M43,60.5 v5" stroke="#555" stroke-width="1" fill="none"/><text x="33.5" y="74" font-family="Liberation Sans" font-size="10.5" fill="#3a3a3a" text-anchor="middle">B</text></svg>
<div class="b" style="left:256.3px;top:317.1px;width:80px;height:80px;background:#ffffff;border:1px solid #c9c9c9;border-radius:4px"></div><svg style="left:256.3px;top:317.1px;overflow:visible" width="80" height="80" viewBox="0 0 80 80"><rect x="20.6" y="22.2" width="43.4" height="17.500000000000004" fill="#e0e1e1"/><rect x="42.9" y="39.7" width="18.700000000000003" height="20.5" fill="#e0e1e1"/><path d="M20.6,19.2 H64 V60 M20.6,42.1 H64 M41.1,42 V60" stroke="#555" stroke-width="0.9" fill="none"/><path d="M25.8,23.6 H56 Q60.3,23.6 60.3,28 V57.9 M25.8,38.6 H60.3 M44.6,57.9 V28 Q44.6,23.6 49,23.6" stroke="#c8102e" stroke-width="1.8" fill="none"/><circle cx="48.2" cy="26.9" r="1.8" fill="#333"/><circle cx="57.5" cy="26.9" r="1.8" fill="#333"/><circle cx="48.2" cy="35.6" r="1.8" fill="#333"/><circle cx="57.5" cy="35.6" r="1.8" fill="#333"/><path d="M25.8,12.1 v5 M25.8,14.6 H61.4 M61.4,12.1 v5" stroke="#555" stroke-width="1" fill="none"/><text x="43.2" y="13.4" font-family="Liberation Sans" font-size="10.5" fill="#3a3a3a" text-anchor="middle">L</text><text x="9.2" y="23.3" font-family="Liberation Sans" font-size="9.5" fill="#3a3a3a" text-anchor="middle">Ca</text><text x="9.2" y="46.2" font-family="Liberation Sans" font-size="9.5" fill="#3a3a3a" text-anchor="middle">Ca</text><path d="M15.5,18 h4 M15.5,20.5 h4 M15.5,41 h4 M15.5,43.5 h4" stroke="#666" stroke-width="0.7"/><path d="M66.1,22.8 h5 M68.6,22.8 V60.2 M66.1,60.2 h5" stroke="#555" stroke-width="1" fill="none"/><text x="72" y="47.4" font-family="Liberation Sans" font-size="10.5" fill="#3a3a3a" text-anchor="middle">L</text><path d="M37,43.2 h2.4 V57.9 h-2.4 M25.8,46.2 H39" stroke="#555" stroke-width="0.9" fill="none"/><text x="32.3" y="57.3" font-family="Liberation Sans" font-size="10.5" fill="#3a3a3a" text-anchor="middle">O</text><path d="M40.8,61.2 v5 M40.8,63.7 H61.4 M61.4,61.2 v5" stroke="#555" stroke-width="1" fill="none"/><text x="53.7" y="74.3" font-family="Liberation Sans" font-size="10.5" fill="#3a3a3a" text-anchor="middle">S</text></svg>
<div class="b" style="left:153.6px;top:471px;width:15.599999999999994px;height:15.5px;background:#fff;border:1px solid #dcdcdc;border-radius:2px;"></div>
<div class="t" style="left:175.3px;top:471.45px;font-size:11.9px;color:#404040;">Longitud. bar Type:</div>
<div class="b" style="left:281px;top:467.3px;width:64.80000000000001px;height:23.19999999999999px;background:#f0f0f0;border:1px solid #c6c6c6;border-radius:3px;"></div><div class="t" style="left:285.5px;top:471.99px;font-size:12px;color:#bdbdbd;">H6</div><svg style="left:331.8px;top:475.9px" width="9" height="5"><path d="M0.5,0.5 H8.5 L4.5,4.5 Z" fill="#b0b0b0"/></svg>
<div class="t" style="left:361px;top:104.62px;font-size:11.8px;color:#404040;">Template:</div>
<div class="b" style="left:360px;top:125.6px;width:275.4px;height:23.599999999999994px;background:#fff;border:1px solid #c6c6c6;border-radius:3px;"></div><div class="t" style="left:364.5px;top:130.49px;font-size:12px;color:#2c2c2c;">&lt;In Session&gt;</div><svg style="left:621.4px;top:134.39999999999998px" width="9" height="5"><path d="M0.5,0.5 H8.5 L4.5,4.5 Z" fill="#111"/></svg>
<div class="b" style="left:646px;top:122.8px;width:28.5px;height:27.39999999999999px;background:#f1f1f1;border:1px solid #f1f1f1;border-radius:3px;"></div>
<div class="b" style="left:685.5px;top:122.8px;width:28.5px;height:27.39999999999999px;background:#e3e3e3;border:1px solid #e3e3e3;border-radius:3px;"></div>
<div class="b" style="left:724.8px;top:122.8px;width:28.5px;height:27.39999999999999px;background:#f1f1f1;border:1px solid #f1f1f1;border-radius:3px;"></div>
<div class="b" style="left:764.5px;top:122.8px;width:28.5px;height:27.39999999999999px;background:#f1f1f1;border:1px solid #f1f1f1;border-radius:3px;"></div>
<svg style="left:652.3px;top:128.9px" width="16" height="16" viewBox="0 0 16 16"><path d="M2,0.8 H12 L15.2,4 V13.8 Q15.2,15.2 13.8,15.2 H2.2 Q0.8,15.2 0.8,13.8 V2.2 Q0.8,0.8 2.2,0.8 Z" fill="#8a8a8a"/><rect x="3.6" y="2.6" width="7.6" height="3.6" fill="#fff" opacity="0.92"/><circle cx="8" cy="10.6" r="2" fill="#fff"/></svg>
<svg style="left:691.8px;top:128.9px" width="16" height="16" viewBox="0 0 16 16"><path d="M2,0.8 H12 L15.2,4 V13.8 Q15.2,15.2 13.8,15.2 H2.2 Q0.8,15.2 0.8,13.8 V2.2 Q0.8,0.8 2.2,0.8 Z" fill="#3a86d8"/><rect x="3.6" y="2.6" width="7.6" height="3.6" fill="#fff" opacity="0.92"/><circle cx="8" cy="10.6" r="2" fill="#fff"/></svg>
<svg style="left:731px;top:128px" width="16" height="17" viewBox="0 0 16 17"><path d="M5.5,1.5 H10.5 V3 H15 V5 H1 V3 H5.5 Z" fill="#8a8a8a"/><path d="M2.5,6 H13.5 L12.8,16 H3.2 Z" fill="#8a8a8a"/><path d="M6,7.5 V14.5 M10,7.5 V14.5" stroke="#f1f1f1" stroke-width="1.3"/></svg>
<svg style="left:768px;top:128px" width="22" height="17" viewBox="0 0 22 17"><rect x="3.4" y="5" width="11" height="7.4" rx="1" fill="none" stroke="#8a8a8a" stroke-width="1.9"/><rect x="5.6" y="7.4" width="7" height="2.6" fill="#8a8a8a"/><path d="M14.8,1.3 H19.6 M17.2,1.3 V15.9 M14.8,15.9 H19.6" stroke="#8a8a8a" stroke-width="1.7" fill="none"/></svg>
<div class="t" style="left:362.5px;top:162.85px;font-size:11.9px;color:#404040;">Pick face/line and host to place reinforcement:</div>
<div class="b" style="left:360.5px;top:187.2px;width:397.0px;height:26.100000000000023px;background:#fff;border:1px solid #c6c6c6;border-radius:3px;"></div>
<div class="t" style="left:366px;top:192.56px;font-size:12.2px;color:#2c2c2c;">2 element(s) / 1 face picked.</div>
<div class="b" style="left:766px;top:187.2px;width:27px;height:26.100000000000023px;background:#e1e1e1;border:1px solid #e1e1e1;border-radius:3px;"></div><svg style="left:766px;top:187.2px" width="27" height="26.100000000000023"><path d="M9.0,5.550000000000011 L20.0,13.550000000000011 L14.0,14.050000000000011 L9.0,20.55000000000001 Z" fill="#333"/></svg>
<div class="t" style="left:363.5px;top:233.99px;font-size:12px;color:#404040;">B:</div>
<div class="b" style="left:379.4px;top:227.5px;width:112.10000000000002px;height:26.099999999999994px;background:#fff;border:1px solid #c6c6c6;border-radius:3px;"></div><div class="t" style="left:379.4px;width:112.10000000000002px;text-align:center;top:233.54px;font-size:12px;color:#2c2c2c">600 mm</div>
<div class="t" style="left:363.5px;top:271.49px;font-size:12px;color:#404040;">S:</div>
<div class="b" style="left:379.4px;top:265.2px;width:112.10000000000002px;height:26.100000000000023px;background:#fff;border:1px solid #c6c6c6;border-radius:3px;"></div><div class="t" style="left:379.4px;width:112.10000000000002px;text-align:center;top:271.24px;font-size:12px;color:#2c2c2c">290 mm</div>
<svg style="left:510px;top:225px" width="90" height="105" viewBox="510 225 90 105"><rect x="540.3" y="233.8" width="27.5" height="47" fill="#e0e1e1"/><rect x="531" y="280" width="46" height="42.8" fill="#e0e1e1"/><path d="M531,285.2 H577 M531,318.8 H577" stroke="#b4b6b8" stroke-width="1.2"/><path d="M544,237.3 V308 Q544,313.7 550,313.7 H559 Q564.8,313.7 564.8,308 V237.3" stroke="#c8102e" stroke-width="1.8" fill="none"/><path d="M535,237.3 H526 V280 H535" stroke="#555" stroke-width="1" fill="none"/><path d="M571,237.3 H579 V316 H571" stroke="#555" stroke-width="1" fill="none"/><path d="M547,317 l2,-2 l2,2 M553,317 l2,-2 l2,2 M559,317 l2,-2 l2,2" stroke="#333" stroke-width="1" fill="none"/><path d="M577,314.5 H584 M577,317.5 H584" stroke="#555" stroke-width="0.9"/><text x="522.5" y="262" font-family="Liberation Sans" font-size="9" fill="#444" text-anchor="middle">0</text><text x="583" y="282" font-family="Liberation Sans" font-size="9" fill="#444" text-anchor="middle">L</text><text x="588" y="320" font-family="Liberation Sans" font-size="9" fill="#444" text-anchor="middle">C<tspan font-size="7">a</tspan></text></svg>
<svg style="left:599.3px;top:233.9px" width="18" height="18"><circle cx="9" cy="9" r="7.4" fill="#fff" stroke="#6b6b6b" stroke-width="1.6"/></svg>
<div class="t" style="left:630.2px;top:234.49px;font-size:12px;color:#404040;">L:</div>
<div class="b" style="left:646.3px;top:227.7px;width:112.0px;height:26.100000000000023px;background:#f0f0f0;border:1px solid #c6c6c6;border-radius:3px;"></div><div class="t" style="left:646.3px;width:112.0px;text-align:center;top:233.74px;font-size:12px;color:#c0c0c0">1487 mm</div>
<svg style="left:599.3px;top:269.2px" width="18" height="18"><circle cx="9" cy="9" r="8.2" fill="#3b76bb"/><circle cx="9" cy="9" r="2.8" fill="#fff"/></svg>
<div class="t" style="left:628px;top:271.49px;font-size:12px;color:#404040;">O:</div>
<div class="b" style="left:646.3px;top:265.4px;width:112.0px;height:25.900000000000034px;background:#fff;border:1px solid #c6c6c6;border-radius:3px;"></div><div class="t" style="left:646.3px;width:112.0px;text-align:center;top:271.34px;font-size:12px;color:#2c2c2c">800 mm</div>
<div class="t" style="left:622.5px;top:308.69px;font-size:12px;color:#404040;">Ca:</div>
<div class="b" style="left:646.3px;top:302.7px;width:112.0px;height:25.600000000000023px;background:#fff;border:1px solid #c6c6c6;border-radius:3px;"></div><div class="t" style="left:646.3px;width:112.0px;text-align:center;top:308.49px;font-size:12px;color:#2c2c2c">23 mm</div>
<div class="b" style="left:766.5px;top:302.3px;width:26.100000000000023px;height:26.0px;background:#e1e1e1;border:1px solid #e1e1e1;border-radius:3px;"></div><svg style="left:766.5px;top:302.3px" width="26.100000000000023" height="26.0"><path d="M8.550000000000011,5.5 L19.55000000000001,13.5 L13.550000000000011,14.0 L8.550000000000011,20.5 Z" fill="#333"/></svg>
<div class="t" style="left:363.5px;top:349.02px;font-size:11.8px;color:#404040;">Bar Type:</div>
<div class="b" style="left:446.2px;top:345.2px;width:312.3px;height:22.600000000000023px;background:#fff;border:1px solid #c6c6c6;border-radius:3px;"></div><div class="t" style="left:450.7px;top:349.59px;font-size:12px;color:#2c2c2c;">H20</div><svg style="left:744.5px;top:353.5px" width="9" height="5"><path d="M0.5,0.5 H8.5 L4.5,4.5 Z" fill="#111"/></svg>
<div class="t" style="left:363.5px;top:379.09px;font-size:11.8px;color:#404040;">Shape:</div>
<div class="b" style="left:446.2px;top:375.27px;width:312.3px;height:22.600000000000023px;background:#fff;border:1px solid #c6c6c6;border-radius:3px;"></div><div class="t" style="left:450.7px;top:379.66px;font-size:12px;color:#2c2c2c;">None</div><svg style="left:744.5px;top:383.57px" width="9" height="5"><path d="M0.5,0.5 H8.5 L4.5,4.5 Z" fill="#111"/></svg>
<div class="t" style="left:363.5px;top:409.16px;font-size:11.8px;color:#404040;">Hook at Start:</div>
<div class="b" style="left:446.2px;top:405.34px;width:312.3px;height:22.600000000000023px;background:#fff;border:1px solid #c6c6c6;border-radius:3px;"></div><div class="t" style="left:450.7px;top:409.73px;font-size:12px;color:#2c2c2c;">None</div><svg style="left:744.5px;top:413.64px" width="9" height="5"><path d="M0.5,0.5 H8.5 L4.5,4.5 Z" fill="#111"/></svg>
<div class="t" style="left:363.5px;top:439.23px;font-size:11.8px;color:#404040;">Hook at End:</div>
<div class="b" style="left:446.2px;top:435.40999999999997px;width:312.3px;height:22.600000000000023px;background:#fff;border:1px solid #c6c6c6;border-radius:3px;"></div><div class="t" style="left:450.7px;top:439.80px;font-size:12px;color:#2c2c2c;">None</div><svg style="left:744.5px;top:443.71px" width="9" height="5"><path d="M0.5,0.5 H8.5 L4.5,4.5 Z" fill="#111"/></svg>
<svg style="left:361.9px;top:469.6px" width="18" height="18"><circle cx="9" cy="9" r="7.4" fill="#fff" stroke="#6b6b6b" stroke-width="1.6"/></svg>
<div class="t" style="left:388px;top:471.52px;font-size:11.8px;color:#404040;"># of Bars:</div>
<div class="b" style="left:446.6px;top:466.8px;width:111.69999999999993px;height:23.599999999999966px;background:#f0f0f0;border:1px solid #c6c6c6;border-radius:3px;"></div>
<div class="t" style="left:446.6px;width:91.79999999999995px;text-align:center;top:471.49px;font-size:12px;color:#c0c0c0">2</div>
<svg style="left:540px;top:469px" width="12" height="20"><path d="M2.5,7 L6,3.5 L9.5,7 M2.5,13 L6,16.5 L9.5,13" stroke="#8a8a8a" stroke-width="1.1" fill="none"/></svg>
<svg style="left:569.3px;top:469.4px" width="18" height="18"><circle cx="9" cy="9" r="8.2" fill="#3b76bb"/><circle cx="9" cy="9" r="2.8" fill="#fff"/></svg>
<div class="t" style="left:594.3px;top:471.59px;font-size:12px;color:#404040;">Spacing:</div>
<div class="b" style="left:645.2px;top:465.5px;width:112.19999999999993px;height:25.80000000000001px;background:#fff;border:1px solid #c6c6c6;border-radius:3px;"></div><div class="t" style="left:645.2px;width:112.19999999999993px;text-align:center;top:471.39px;font-size:12px;color:#2c2c2c">250 mm</div>
<div class="b" style="left:153px;top:507.6px;width:643.2px;height:26.799999999999955px;background:#f3faee;border:1px solid #78be4e;border-radius:3px;border-width:1.7px"></div>
<svg style="left:158px;top:511px" width="20" height="20"><circle cx="9.6" cy="9.9" r="8.3" fill="#3e9a1e"/><path d="M5.3,10.1 L8.4,13.1 L14,7.4" stroke="#fff" stroke-width="2.3" fill="none"/></svg>
<div class="t" style="left:182.4px;top:513.86px;font-size:12.2px;color:#4b9a2a;">Connection rebars generated.</div>
<div class="b" style="left:576.2px;top:544px;width:103.79999999999995px;height:32.700000000000045px;background:#e1e1e1;border:1px solid #e1e1e1;border-radius:3px;"></div>
<div class="t" style="left:576.2px;width:103.79999999999995px;text-align:center;top:553.60px;font-size:12.3px;color:#404040">Apply</div>
<div class="b" style="left:692.5px;top:544px;width:103.5px;height:32.700000000000045px;background:#e1e1e1;border:1px solid #e1e1e1;border-radius:3px;"></div>
<div class="t" style="left:692.5px;width:103.5px;text-align:center;top:553.60px;font-size:12.3px;color:#404040">Close</div>
</body></html>
